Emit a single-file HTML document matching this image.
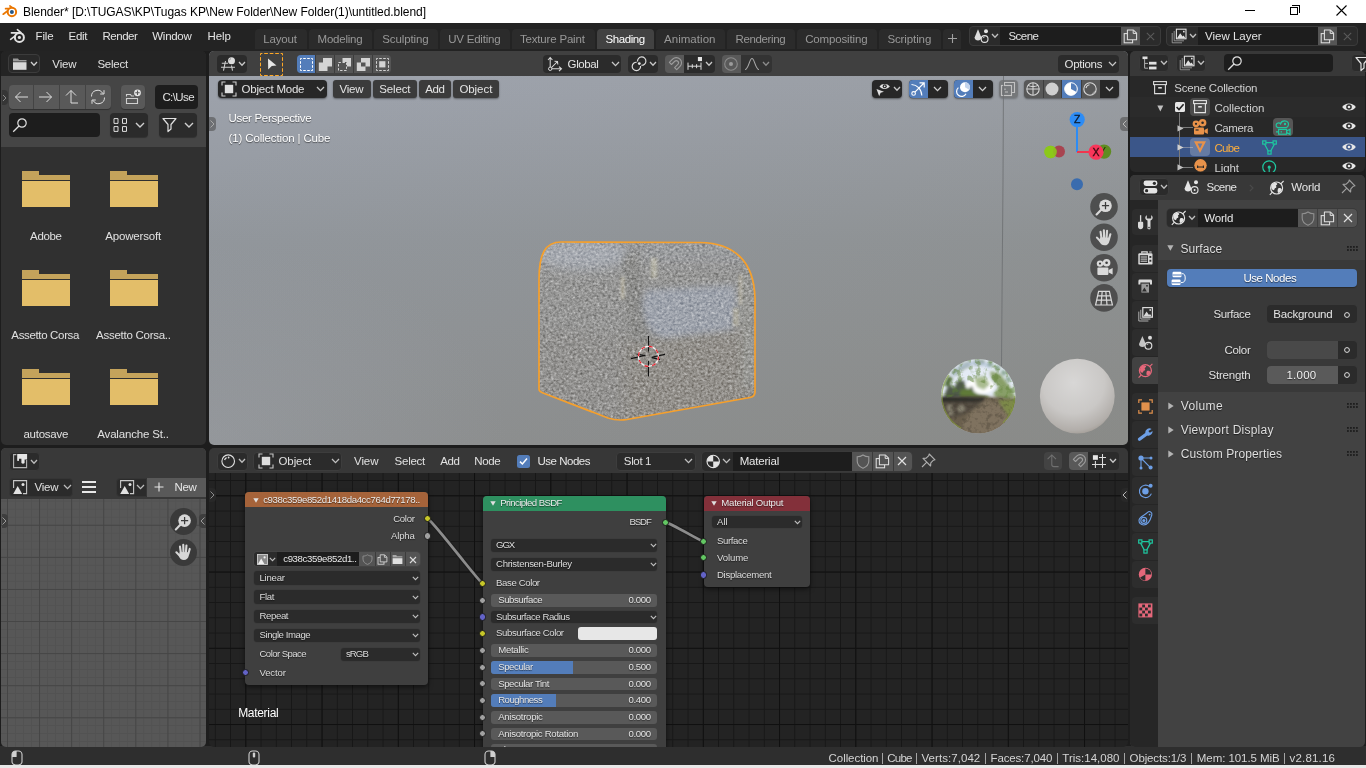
<!DOCTYPE html>
<html><head><meta charset="utf-8"><title>Blender</title>
<style>
*{box-sizing:border-box;margin:0;padding:0}
html,body{width:1366px;height:768px;overflow:hidden;background:#1d1d1d;font-family:"Liberation Sans",sans-serif;font-size:12px}
.a{position:absolute}
.t{position:absolute;white-space:nowrap;line-height:20px;height:20px}
svg{position:absolute;overflow:visible}
.sh{text-shadow:0 1px 1px rgba(0,0,0,.55)}
</style></head>
<body>
<div id="root" style="position:absolute;left:0;top:0;width:1366px;height:768px;will-change:transform">
<!-- title bar -->
<div class="a" style="left:0;top:0;width:1366px;height:23px;background:#fff"></div>
<span class="t" style="left:23px;top:2px;color:#000;font-size:12px;letter-spacing:-0.048px;">Blender* [D:\TUGAS\KP\Tugas KP\New Folder\New Folder(1)\untitled.blend]</span>
<!-- top bar -->
<div class="a" style="left:0;top:23px;width:1366px;height:28px;background:#232323"></div>
<!-- status bar -->
<div class="a" style="left:0;top:746px;width:1366px;height:20px;background:#2e2e2e"></div>
<!-- areas -->
<div class="a" id="fb" style="left:1px;top:51px;width:205px;height:394px;background:#303030;border-radius:5px;overflow:hidden">
  <div class="a" style="left:0;top:0;width:205px;height:25px;background:#242424"></div>
  <div class="a" style="left:0;top:25px;width:205px;height:71px;background:#454545"></div>
</div>
<div class="a" id="ie" style="left:1px;top:448px;width:205px;height:298.8px;background:#575757;border-radius:5px;overflow:hidden">
  <div class="a" style="left:0;top:0;width:205px;height:300px;background-image:linear-gradient(90deg,#454545 1px,transparent 1px),linear-gradient(180deg,#454545 1px,transparent 1px),linear-gradient(90deg,#525252 1px,transparent 1px),linear-gradient(180deg,#525252 1px,transparent 1px);background-size:32.1px 32.1px,32.1px 32.1px,8.025px 8.025px,8.025px 8.025px;background-position:6px 12.6px,6px 12.6px,6px 12.6px,6px 12.6px"></div>
  <div class="a" style="left:0;top:0;width:205px;height:50.5px;background:#393939"></div>
</div>
<div class="a" id="vp" style="left:209px;top:51px;width:918.5px;height:394px;background:linear-gradient(to bottom right,rgba(124,121,103,0) 15%,rgba(124,121,103,.1) 50%,rgba(124,121,103,.3) 100%),radial-gradient(ellipse 300px 200px at 0% 100%,rgba(158,163,172,.5) 0%,rgba(158,163,172,0) 100%),linear-gradient(180deg,#9fa4ad 0%,#9ca1aa 12%,#92979d 48%,#8f9296 100%);border-radius:5px;overflow:hidden">
  <div class="a" style="left:0;top:0;width:919px;height:25px;background:#404040"></div>
</div>
<div class="a" id="ne" style="left:209px;top:448px;width:918.5px;height:298.8px;background:#232323;border-radius:5px;overflow:hidden">
  <div class="a" style="left:0;top:0;width:919px;height:300px;background-image:linear-gradient(90deg,#101010 1.25px,transparent 1.25px),linear-gradient(180deg,#101010 1.25px,transparent 1.25px),linear-gradient(90deg,#171717 1.25px,transparent 1.25px),linear-gradient(180deg,#171717 1.25px,transparent 1.25px);background-size:76.25px 76.25px,76.25px 76.25px,15.25px 15.25px,15.25px 15.25px;background-position:36.3px 47.3px,36.3px 47.3px,36.3px 47.3px,36.3px 47.3px"></div>
  <div class="a" style="left:0;top:0;width:919px;height:25px;background:#373737"></div>
</div>
<div class="a" id="ol" style="left:1130px;top:51px;width:234.5px;height:121px;background:#282828;border-radius:5px;overflow:hidden">
  <div class="a" style="left:0;top:0;width:236px;height:25px;background:#383838"></div>
  <div class="a" style="left:0;top:46px;width:236px;height:20px;background:#2b2b2b"></div>
  <div class="a" style="left:0;top:86px;width:236px;height:20px;background:#3b5689"></div>
</div>
<div class="a" id="pr" style="left:1130px;top:175px;width:234.5px;height:571.8px;background:#424242;border-radius:5px;overflow:hidden">
  <div class="a" style="left:0;top:0;width:236px;height:25px;background:#383838"></div>
  <div class="a" style="left:0;top:25px;width:28px;height:548px;background:#262626"></div>
  <div class="a" style="left:28px;top:85px;width:208px;height:132px;background:#393939"></div>
</div>
<!-- window title icon (blender logo, orange) -->
<svg style="left:2px;top:4px" width="16" height="15" viewBox="0 0 16 15">
  <g stroke="#ea7600" stroke-width="1.7" stroke-linecap="round" fill="none"><path d="M7.9 1.9 L11.2 4.4 M3.6 4.7 H9.4 M1.2 10.2 L5.8 6.8"/></g>
  <circle cx="9.9" cy="7.9" r="4.25" fill="#fff" stroke="#ea7600" stroke-width="2"/>
  <circle cx="9.9" cy="7.9" r="2" fill="#265787"/>
</svg>
<!-- window controls -->
<div class="a" style="left:1245px;top:10px;width:10px;height:1px;background:#000"></div>
<div class="a" style="left:1290px;top:7px;width:8px;height:8px;border:1px solid #000"></div>
<div class="a" style="left:1292px;top:5px;width:8px;height:8px;border:1px solid #000;border-left-color:transparent;border-bottom-color:transparent"></div>
<div class="a" style="left:1292px;top:5px;width:2px;height:1px;background:#000"></div>
<div class="a" style="left:1299px;top:11px;width:1px;height:2px;background:#000"></div>
<svg style="left:1336px;top:5px" width="11" height="11" viewBox="0 0 11 11"><path d="M0.5 0.5 L10.5 10.5 M10.5 0.5 L0.5 10.5" stroke="#000" stroke-width="1.1" fill="none"/></svg>

<!-- topbar blender icon -->
<svg style="left:10px;top:28px" width="16" height="16" viewBox="0 0 16 16">
  <g stroke="#e2e2e2" stroke-width="1.6" stroke-linecap="round" fill="none"><path d="M7.4 1.7 L11 4.7 M1.4 4.9 H9.6 M.6 11.3 L5.2 7.8"/></g>
  <circle cx="9.4" cy="9.4" r="4.5" fill="#232323" stroke="#e2e2e2" stroke-width="2"/>
  <circle cx="9.4" cy="9.4" r="1.6" fill="#e2e2e2"/>
</svg>
<span class="t" style="left:35.5px;top:26px;color:#e4e4e4;font-size:11.5px;letter-spacing:-0.133px;">File</span>
<span class="t" style="left:68.5px;top:26px;color:#e4e4e4;font-size:11.5px;letter-spacing:-0.282px;">Edit</span>
<span class="t" style="left:102.4px;top:26px;color:#e4e4e4;font-size:11.5px;letter-spacing:-0.453px;">Render</span>
<span class="t" style="left:152.3px;top:26px;color:#e4e4e4;font-size:11.5px;letter-spacing:-0.284px;">Window</span>
<span class="t" style="left:207.5px;top:26px;color:#e4e4e4;font-size:11.5px;letter-spacing:-0.114px;">Help</span>

<!-- workspace tabs -->
<div class="a" style="left:255px;top:29px;width:52px;height:20px;background:#2b2b2b;border-radius:4px 4px 0 0"></div>
<div class="a" style="left:309px;top:29px;width:63px;height:20px;background:#2b2b2b;border-radius:4px 4px 0 0"></div>
<div class="a" style="left:374px;top:29px;width:64px;height:20px;background:#2b2b2b;border-radius:4px 4px 0 0"></div>
<div class="a" style="left:440px;top:29px;width:70px;height:20px;background:#2b2b2b;border-radius:4px 4px 0 0"></div>
<div class="a" style="left:512px;top:29px;width:83px;height:20px;background:#2b2b2b;border-radius:4px 4px 0 0"></div>
<div class="a" style="left:597px;top:29px;width:57px;height:20px;background:#424242;border-radius:4px 4px 0 0"></div>
<div class="a" style="left:656px;top:29px;width:69px;height:20px;background:#2b2b2b;border-radius:4px 4px 0 0"></div>
<div class="a" style="left:727px;top:29px;width:68px;height:20px;background:#2b2b2b;border-radius:4px 4px 0 0"></div>
<div class="a" style="left:797px;top:29px;width:80px;height:20px;background:#2b2b2b;border-radius:4px 4px 0 0"></div>
<div class="a" style="left:879px;top:29px;width:62px;height:20px;background:#2b2b2b;border-radius:4px 4px 0 0"></div>
<div class="a" style="left:943px;top:29px;width:18px;height:20px;background:#2b2b2b;border-radius:4px 4px 0 0"></div>
<span class="t" style="left:263.3px;top:29px;color:#989898;font-size:11.5px;letter-spacing:-0.172px;">Layout</span>
<span class="t" style="left:317.6px;top:29px;color:#989898;font-size:11.5px;letter-spacing:-0.246px;">Modeling</span>
<span class="t" style="left:382.3px;top:29px;color:#989898;font-size:11.5px;letter-spacing:-0.124px;">Sculpting</span>
<span class="t" style="left:448.3px;top:29px;color:#989898;font-size:11.5px;letter-spacing:-0.234px;">UV Editing</span>
<span class="t" style="left:520px;top:29px;color:#989898;font-size:11.5px;letter-spacing:-0.187px;">Texture Paint</span>
<span class="t" style="left:605.6px;top:29px;color:#ffffff;font-size:11.5px;letter-spacing:-0.446px;">Shading</span>
<span class="t" style="left:664px;top:29px;color:#989898;font-size:11.5px;letter-spacing:0.040px;">Animation</span>
<span class="t" style="left:735.6px;top:29px;color:#989898;font-size:11.5px;letter-spacing:-0.386px;">Rendering</span>
<span class="t" style="left:805.2px;top:29px;color:#989898;font-size:11.5px;letter-spacing:-0.157px;">Compositing</span>
<span class="t" style="left:887.4px;top:29px;color:#989898;font-size:11.5px;letter-spacing:-0.106px;">Scripting</span>
<svg style="left:947px;top:33px" width="11" height="11" viewBox="0 0 11 11"><path d="M5.5 1 V10 M1 5.5 H10" stroke="#a0a0a0" stroke-width="1.1" fill="none"/></svg>

<!-- scene selector -->
<div class="a" style="left:969px;top:26px;width:192px;height:20px;background:#2b2b2b;border:1px solid #3b3b3b;border-radius:4px"></div>
<div class="a" style="left:1000px;top:27px;width:121px;height:18px;background:#1d1d1d"></div>
<div class="a" style="left:1121px;top:27px;width:19px;height:18px;background:#555"></div>
<span class="t" style="left:1008.5px;top:26px;color:#e4e4e4;font-size:11.5px;letter-spacing:-0.562px;">Scene</span>
<!-- view layer selector -->
<div class="a" style="left:1166px;top:26px;width:192px;height:20px;background:#2b2b2b;border:1px solid #3b3b3b;border-radius:4px"></div>
<div class="a" style="left:1198px;top:27px;width:120px;height:18px;background:#1d1d1d"></div>
<div class="a" style="left:1318px;top:27px;width:19px;height:18px;background:#555"></div>
<span class="t" style="left:1205px;top:26px;color:#e4e4e4;font-size:11.5px;letter-spacing:0.001px;">View Layer</span>
<!-- scene selector icons -->
<svg style="left:974px;top:28px" width="15" height="16" viewBox="0 0 15 16"><path d="M4 1.2 L7.4 9.4 C7.4 11.4 5.8 12.4 4 12.4 C2.2 12.4 .6 11.4 .6 9.4 Z" fill="#dcdcdc"/><circle cx="12" cy="3.2" r="2" fill="#e4e4e4"/><circle cx="10.6" cy="11" r="3.4" fill="#2b2b2b" stroke="#e4e4e4" stroke-width="1.1"/><path d="M9 10.2 A1.8 1.8 0 0 1 10.6 9" stroke="#e4e4e4" stroke-width=".9" fill="none"/></svg>
<svg style="left:991px;top:33px" width="8" height="6" viewBox="0 0 8 6"><path d="M1 1 L4 4.2 L7 1" stroke="#c0c0c0" stroke-width="1.3" fill="none"/></svg>
<svg style="left:1123px;top:28.5px" width="15" height="15" viewBox="0 0 15 15"><rect x="1.2" y="4.6" width="8.4" height="9.2" fill="none" stroke="#e0e0e0" stroke-width="1.05"/><path d="M4.4 1 H10.4 L13.6 4.2 V10.8 H4.4 Z" fill="#555" stroke="#e0e0e0" stroke-width="1.05" stroke-linejoin="round"/><path d="M10.2 1.2 V4.4 H13.4" fill="none" stroke="#e0e0e0" stroke-width="1"/></svg>
<svg style="left:1145.5px;top:31.5px" width="9" height="9" viewBox="0 0 9 9"><path d="M.8 .8 L8.2 8.2 M8.2 .8 L.8 8.2" stroke="#5a5a5a" stroke-width="1.1"/></svg>
<!-- view layer icons -->
<svg style="left:1171px;top:28px" width="16" height="16" viewBox="0 0 16 16"><path d="M1.2 5 V14.8 H11 M3.2 3 V12.8 H13" stroke="#a8a8a8" stroke-width=".8" fill="none"/><rect x="5.4" y="1.2" width="9.6" height="9.6" fill="none" stroke="#e0e0e0" stroke-width="1.1"/><path d="M6 10.2 L9.2 5.2 L11.6 8.6 L12.6 7.6 L14.4 10.2Z" fill="#e0e0e0"/><rect x="12" y="2.8" width="1.6" height="1.6" fill="#e0e0e0"/></svg>
<svg style="left:1189px;top:33px" width="8" height="6" viewBox="0 0 8 6"><path d="M1 1 L4 4.2 L7 1" stroke="#c0c0c0" stroke-width="1.3" fill="none"/></svg>
<svg style="left:1320px;top:28.5px" width="15" height="15" viewBox="0 0 15 15"><rect x="1.2" y="4.6" width="8.4" height="9.2" fill="none" stroke="#e0e0e0" stroke-width="1.05"/><path d="M4.4 1 H10.4 L13.6 4.2 V10.8 H4.4 Z" fill="#555" stroke="#e0e0e0" stroke-width="1.05" stroke-linejoin="round"/><path d="M10.2 1.2 V4.4 H13.4" fill="none" stroke="#e0e0e0" stroke-width="1"/></svg>
<svg style="left:1343px;top:31.5px" width="9" height="9" viewBox="0 0 9 9"><path d="M.8 .8 L8.2 8.2 M8.2 .8 L.8 8.2" stroke="#5a5a5a" stroke-width="1.1"/></svg>
<!-- FILE BROWSER -->
<!-- header -->
<div class="a" style="left:8px;top:54px;width:32px;height:19px;background:#292929;border:1px solid #3c3c3c;border-radius:4px"></div>
<svg style="left:12px;top:57px" width="16" height="14" viewBox="0 0 16 14"><path d="M1 1.5 H6 L7 3 H14.5 V4.5 H1 Z" fill="#9a9a9a"/><path d="M1 5.2 H14.5 V12.8 H1 Z" fill="#d8d8d8"/></svg>
<svg style="left:30px;top:61px" width="8" height="6" viewBox="0 0 8 6"><path d="M1 1 L4 4.2 L7 1" stroke="#cfcfcf" stroke-width="1.3" fill="none"/></svg>
<span class="t" style="left:52.3px;top:54px;color:#e0e0e0;font-size:11.5px;letter-spacing:-0.130px;">View</span>
<span class="t" style="left:97.4px;top:54px;color:#e0e0e0;font-size:11.5px;letter-spacing:-0.245px;">Select</span>
<!-- region toggle -->
<div class="a" style="left:2px;top:90px;width:6px;height:15px;background:#363636;border-radius:0 4px 4px 0"></div>
<svg style="left:2px;top:94px" width="5" height="8" viewBox="0 0 5 8"><path d="M1 1 L4 4 L1 7" stroke="#8a8a8a" stroke-width="1" fill="none"/></svg>
<!-- nav buttons -->
<div class="a" style="left:9px;top:85px;width:102px;height:24px;background:#595959;border-radius:4px;box-shadow:0 1px 1px rgba(0,0,0,.3)"></div>
<div class="a" style="left:33px;top:85px;width:1px;height:24px;background:#444"></div>
<div class="a" style="left:59px;top:85px;width:1px;height:24px;background:#444"></div>
<div class="a" style="left:85px;top:85px;width:1px;height:24px;background:#444"></div>
<svg style="left:14px;top:90px" width="15" height="14" viewBox="0 0 15 14"><path d="M14 7 H1.5 M6.5 2 L1.5 7 L6.5 12" stroke="#dedede" stroke-width="1" fill="none"/></svg>
<svg style="left:38px;top:90px" width="15" height="14" viewBox="0 0 15 14"><path d="M1 7 H13.5 M8.5 2 L13.5 7 L8.5 12" stroke="#dedede" stroke-width="1" fill="none"/></svg>
<svg style="left:64px;top:89px" width="16" height="16" viewBox="0 0 16 16"><path d="M2 6.5 L7 1.5 L12 6.5 M7 1.5 V14 H14" stroke="#dedede" stroke-width="1" fill="none"/></svg>
<svg style="left:90px;top:89px" width="16" height="16" viewBox="0 0 16 16"><path d="M1.5 7.5 A6 6 0 0 1 12.8 4.5 M14 1.2 V5 H10.2 M14.5 8.5 A6 6 0 0 1 3.2 11.5 M2 14.8 V11 H5.8" stroke="#dedede" stroke-width="1" fill="none"/></svg>
<!-- new folder -->
<div class="a" style="left:121px;top:85px;width:24px;height:24px;background:#595959;border-radius:4px;box-shadow:0 1px 1px rgba(0,0,0,.3)"></div>
<svg style="left:125px;top:88px" width="18" height="18" viewBox="0 0 18 18"><path d="M1.5 10.5 H12.5 V15.5 H1.5 Z M1.5 8.5 V6.5 H5.5 L6.5 8 H9" stroke="#d0d0d0" stroke-width="1.1" fill="none"/><circle cx="12.5" cy="4.8" r="3.4" fill="#e6e6e6"/><path d="M12.5 2.6 V7 M10.3 4.8 H14.7" stroke="#595959" stroke-width="1.1"/></svg>
<!-- path -->
<div class="a" style="left:155px;top:85px;width:43px;height:24px;background:#1d1d1d;border-radius:4px;overflow:hidden"></div>
<div class="a" style="left:155px;top:85px;width:43px;height:24px;overflow:hidden"><span class="t" style="left:7.4px;top:2px;color:#e0e0e0;font-size:11.5px;letter-spacing:-0.576px;">C:\Use</span></div>
<!-- search -->
<div class="a" style="left:9px;top:113px;width:91px;height:24px;background:#1d1d1d;border-radius:4px"></div>
<svg style="left:12px;top:117px" width="16" height="16" viewBox="0 0 16 16"><circle cx="10" cy="6" r="4.2" stroke="#e0e0e0" stroke-width="1.2" fill="none"/><path d="M7 9 L1.2 14.8" stroke="#e0e0e0" stroke-width="1.3"/></svg>
<!-- display mode -->
<div class="a" style="left:110px;top:113px;width:38px;height:24px;background:#2b2b2b;border-radius:4px;box-shadow:0 1px 1px rgba(0,0,0,.3)"></div>
<svg style="left:113px;top:118px" width="16" height="15" viewBox="0 0 16 15"><path d="M1 0.6 H5 V5.4 H1 Z M9.5 0.6 H13.5 V5.4 H9.5 Z M1 8.6 H5 V13.4 H1 Z M9.5 8.6 H13.5 V13.4 H9.5 Z" stroke="#dedede" stroke-width="1" fill="none"/></svg>
<svg style="left:135px;top:122px" width="10" height="7" viewBox="0 0 10 7"><path d="M1 1 L5 5 L9 1" stroke="#d0d0d0" stroke-width="1.4" fill="none"/></svg>
<!-- filter -->
<div class="a" style="left:159px;top:113px;width:38px;height:24px;background:#2b2b2b;border-radius:4px;box-shadow:0 1px 1px rgba(0,0,0,.3)"></div>
<svg style="left:162px;top:117px" width="16" height="16" viewBox="0 0 16 16"><path d="M1 1.5 H14 L9 7.5 V12 L6 14.5 V7.5 Z" stroke="#e0e0e0" stroke-width="1.2" fill="none" stroke-linejoin="round"/></svg>
<svg style="left:184px;top:122px" width="10" height="7" viewBox="0 0 10 7"><path d="M1 1 L5 5 L9 1" stroke="#d0d0d0" stroke-width="1.4" fill="none"/></svg>

<!-- folders -->
<svg style="left:22px;top:171px" width="48" height="36" viewBox="0 0 48 36"><path d="M0 0 H17 V4 H48 V9 H0 Z" fill="#c4a35b"/><path d="M0 10 H48 V36 H0 Z" fill="#e3be69"/></svg>
<svg style="left:110px;top:171px" width="48" height="36" viewBox="0 0 48 36"><path d="M0 0 H17 V4 H48 V9 H0 Z" fill="#c4a35b"/><path d="M0 10 H48 V36 H0 Z" fill="#e3be69"/></svg>
<svg style="left:22px;top:270px" width="48" height="36" viewBox="0 0 48 36"><path d="M0 0 H17 V4 H48 V9 H0 Z" fill="#c4a35b"/><path d="M0 10 H48 V36 H0 Z" fill="#e3be69"/></svg>
<svg style="left:110px;top:270px" width="48" height="36" viewBox="0 0 48 36"><path d="M0 0 H17 V4 H48 V9 H0 Z" fill="#c4a35b"/><path d="M0 10 H48 V36 H0 Z" fill="#e3be69"/></svg>
<svg style="left:22px;top:369px" width="48" height="36" viewBox="0 0 48 36"><path d="M0 0 H17 V4 H48 V9 H0 Z" fill="#c4a35b"/><path d="M0 10 H48 V36 H0 Z" fill="#e3be69"/></svg>
<svg style="left:110px;top:369px" width="48" height="36" viewBox="0 0 48 36"><path d="M0 0 H17 V4 H48 V9 H0 Z" fill="#c4a35b"/><path d="M0 10 H48 V36 H0 Z" fill="#e3be69"/></svg>
<span class="t" style="left:30.1px;top:226px;color:#e0e0e0;font-size:11.5px;letter-spacing:-0.373px;">Adobe</span>
<span class="t" style="left:105.2px;top:226px;color:#e0e0e0;font-size:11.5px;letter-spacing:-0.163px;">Apowersoft</span>
<span class="t" style="left:11.3px;top:325px;color:#e0e0e0;font-size:11.5px;letter-spacing:-0.341px;">Assetto Corsa</span>
<span class="t" style="left:96px;top:325px;color:#e0e0e0;font-size:11.5px;letter-spacing:-0.262px;">Assetto Corsa..</span>
<span class="t" style="left:23.4px;top:424px;color:#e0e0e0;font-size:11.5px;letter-spacing:-0.236px;">autosave</span>
<span class="t" style="left:97.3px;top:424px;color:#e0e0e0;font-size:11.5px;letter-spacing:-0.182px;">Avalanche St..</span>
<!-- IMAGE EDITOR -->
<div class="a" style="left:9px;top:452px;width:31px;height:19px;background:#2b2b2b;border:1px solid #3a3a3a;border-radius:4px"></div>
<svg style="left:13px;top:454px" width="15" height="15" viewBox="0 0 15 15"><path d="M3.4 0.6 H0.6 V13.6 H13.6 V6" stroke="#b4b4b4" stroke-width="1.1" fill="none"/><path d="M4.2 0.1 H14.1 V5.5 H11.6 V9 Q10 10.6 8.4 9 V4.8 H6 V6.6 Q5 7.6 4.2 6.6 Z" fill="#e6e6e6"/></svg>
<svg style="left:30px;top:459px" width="8" height="6" viewBox="0 0 8 6"><path d="M1 1 L4 4.2 L7 1" stroke="#bdbdbd" stroke-width="1.3" fill="none"/></svg>
<!-- view menu -->
<div class="a" style="left:9px;top:478px;width:64px;height:19px;background:#2b2b2b;border:1px solid #353535;border-radius:4px"></div>
<svg style="left:13px;top:480px" width="15" height="15" viewBox="0 0 15 15"><path d="M0.6 8 V0.6 H13.6 V13.6 H10" stroke="#c8c8c8" stroke-width="1.1" fill="none"/><path d="M0.2 14 L4.7 6 L9.2 14 Z" fill="#e2e2e2"/><circle cx="10" cy="4.4" r="1.5" fill="#e2e2e2"/></svg>
<span class="t" style="left:34.4px;top:477px;color:#e0e0e0;font-size:11.5px;letter-spacing:-0.180px;">View</span>
<svg style="left:63px;top:484px" width="9" height="7" viewBox="0 0 9 7"><path d="M1 1 L4.5 4.6 L8 1" stroke="#bdbdbd" stroke-width="1.3" fill="none"/></svg>
<!-- hamburger -->
<div class="a" style="left:82px;top:480.8px;width:14px;height:1.9px;background:#e8e8e8"></div>
<div class="a" style="left:82px;top:486px;width:14px;height:1.9px;background:#e8e8e8"></div>
<div class="a" style="left:82px;top:491.3px;width:14px;height:1.9px;background:#e8e8e8"></div>
<!-- image selector -->
<div class="a" style="left:116px;top:478px;width:31px;height:19px;background:#2b2b2b;border:1px solid #353535;border-radius:4px 0 0 4px"></div>
<svg style="left:120px;top:480px" width="15" height="15" viewBox="0 0 15 15"><path d="M0.6 8 V0.6 H13.6 V13.6 H10" stroke="#c8c8c8" stroke-width="1.1" fill="none"/><path d="M0.2 14 L4.7 6 L9.2 14 Z" fill="#e2e2e2"/><circle cx="10" cy="4.4" r="1.5" fill="#e2e2e2"/></svg>
<svg style="left:136px;top:484px" width="9" height="7" viewBox="0 0 9 7"><path d="M1 1 L4.5 4.6 L8 1" stroke="#bdbdbd" stroke-width="1.3" fill="none"/></svg>
<div class="a" style="left:147px;top:478px;width:59px;height:19px;background:#595959"></div>
<svg style="left:154px;top:482px" width="10" height="10" viewBox="0 0 10 10"><path d="M5 0.5 V9.5 M0.5 5 H9.5" stroke="#e8e8e8" stroke-width="1.1" fill="none"/></svg>
<span class="t" style="left:174.4px;top:477px;color:#e6e6e6;font-size:11.5px;letter-spacing:-0.239px;">New</span>
<!-- region toggles -->
<div class="a" style="left:2px;top:514px;width:6px;height:14px;background:#3e3e3e;border-radius:0 4px 4px 0"></div>
<svg style="left:2px;top:517px" width="5" height="8" viewBox="0 0 5 8"><path d="M0.5 0.5 L4 4 L0.5 7.5" stroke="#9a9a9a" stroke-width="1" fill="none"/></svg>
<div class="a" style="left:199px;top:514px;width:7px;height:14px;background:#3e3e3e;border-radius:4px 0 0 4px"></div>
<svg style="left:200px;top:517px" width="5" height="8" viewBox="0 0 5 8"><path d="M4.5 0.5 L1 4 L4.5 7.5" stroke="#9a9a9a" stroke-width="1" fill="none"/></svg>
<!-- nav gizmos -->
<div class="a" style="left:169.5px;top:508px;width:27px;height:27px;border-radius:50%;background:#3a3a3a"></div>
<svg style="left:174px;top:512px" width="19" height="19" viewBox="0 0 19 19"><path d="M6.6 12.6 L1.8 17.4" stroke="#d6d6d6" stroke-width="2.1" stroke-linecap="round"/><circle cx="10.6" cy="8.6" r="6.3" fill="#d6d6d6"/><path d="M10.6 5 V12.2 M7 8.6 H14.2" stroke="#3a3a3a" stroke-width="1.25"/></svg>
<div class="a" style="left:169.5px;top:538.5px;width:27px;height:27px;border-radius:50%;background:#3a3a3a"></div>
<svg style="left:174.8px;top:543.4px" width="18" height="18" viewBox="0 0 17 17"><g stroke="#d6d6d6" stroke-width="2" stroke-linecap="round" fill="none"><path d="M4.7 3.4 L5.6 9.5 M7.8 1.8 L8 9 M10.8 2.4 L10.3 9 M13.9 5.6 L12.6 10.4 M1.3 8.8 L4.8 12.4"/></g><path d="M4.5 8.4 L12.9 8.8 L13.2 11.4 C12.7 14.6 10.7 16.1 8.4 16.1 C6 16.1 4.2 14.6 3.5 12 Z" fill="#d6d6d6"/></svg>
<!-- VIEWPORT tool header -->
<div class="a" style="left:217px;top:55px;width:30px;height:18px;background:#2b2b2b;border-radius:4px"></div>
<svg style="left:220px;top:56px" width="17" height="16" viewBox="0 0 17 16"><path d="M1.8 7.2 H8 M1 11.3 H15 M5.5 5 L3.5 14.6 M11.5 9.5 L12.5 14.6" stroke="#d0d0d0" stroke-width="1.05" fill="none"/><circle cx="11.5" cy="4.7" r="3.5" fill="#dcdcdc"/><path d="M9.4 4.4 A2.2 2.2 0 0 1 11 2.6" stroke="#8a8a8a" stroke-width=".8" fill="none"/></svg>
<svg style="left:238px;top:61px" width="8" height="6" viewBox="0 0 8 6"><path d="M1 1 L4 4.2 L7 1" stroke="#c8c8c8" stroke-width="1.3" fill="none"/></svg>
<!-- active tool -->
<svg style="left:260px;top:53px" width="23" height="23" viewBox="0 0 23 23"><rect x="0.5" y="0.5" width="22" height="22" fill="none" stroke="#ffa826" stroke-width="1" stroke-dasharray="3.7 1.8" stroke-dashoffset="1.8"/><path d="M8 5.5 L16.5 12.5 L11.8 13 L8.2 16.5 Z" fill="#e6e6e6"/></svg>
<!-- select modes -->
<div class="a" style="left:297px;top:55px;width:94px;height:18px;background:#555;border-radius:4px"></div>
<div class="a" style="left:297px;top:55px;width:18px;height:18px;background:#537dba;border-radius:4px 0 0 4px"></div>
<div class="a" style="left:315px;top:55px;width:1px;height:18px;background:#3c3c3c"></div>
<div class="a" style="left:334px;top:55px;width:1px;height:18px;background:#3c3c3c"></div>
<div class="a" style="left:353px;top:55px;width:1px;height:18px;background:#3c3c3c"></div>
<div class="a" style="left:372px;top:55px;width:1px;height:18px;background:#3c3c3c"></div>
<svg style="left:299px;top:57px" width="15" height="15" viewBox="0 0 15 15"><rect x="1.5" y="1.5" width="12" height="12" fill="none" stroke="#fff" stroke-width="1" stroke-dasharray="2.6 1.4" stroke-dashoffset="1.3"/></svg>
<svg style="left:318px;top:57px" width="15" height="15" viewBox="0 0 15 15"><path d="M5 1 H14 V9.5 H9.5 V14 H0.8 V5.5 H5 Z" fill="#d4d4d4"/></svg>
<svg style="left:337px;top:57px" width="15" height="15" viewBox="0 0 15 15"><path d="M5.5 1 H14 V9.5 H10 V5 H5.5 Z" fill="#d4d4d4"/><path d="M1.5 5.500 H9.5 V13.5 H1.5 Z" fill="none" stroke="#d4d4d4" stroke-width="1" stroke-dasharray="2.4 1.6"/></svg>
<svg style="left:356px;top:57px" width="15" height="15" viewBox="0 0 15 15"><path d="M5 1 H14 V9.5 H9.5 V14 H0.8 V5.5 H5 Z M5 5.5 V9.5 H9.5 V5.5 Z" fill="#d4d4d4" fill-rule="evenodd"/></svg>
<svg style="left:375px;top:57px" width="15" height="15" viewBox="0 0 15 15"><rect x="1.5" y="1.5" width="12" height="12" fill="none" stroke="#d4d4d4" stroke-width="1" stroke-dasharray="2.6 1.4" stroke-dashoffset="1.3"/><rect x="4.2" y="4.2" width="6.2" height="6.2" fill="#d4d4d4"/></svg>
<!-- orientation -->
<div class="a" style="left:543px;top:55px;width:78px;height:18px;background:#2b2b2b;border-radius:4px"></div>
<svg style="left:547px;top:56px" width="16" height="16" viewBox="0 0 16 16"><path d="M3.2 12.8 V1.5 M1 4 L3.2 1.5 L5.4 4 M3.2 12.8 H14.5 M12 10.6 L14.5 12.8 L12 15 M3.2 12.8 L10.5 5.5 M7.5 5.2 L10.5 5.5 L10.8 8.5" stroke="#d8d8d8" stroke-width="1.05" fill="none"/><circle cx="3.2" cy="12.8" r="1.7" fill="#2b2b2b" stroke="#d8d8d8" stroke-width="1"/></svg>
<span class="t" style="left:567.6px;top:54px;color:#e4e4e4;font-size:11.5px;letter-spacing:-0.408px;">Global</span>
<svg style="left:611px;top:61px" width="9" height="7" viewBox="0 0 9 7"><path d="M1 1 L4.5 4.6 L8 1" stroke="#c8c8c8" stroke-width="1.3" fill="none"/></svg>
<!-- pivot -->
<div class="a" style="left:628px;top:55px;width:30px;height:18px;background:#2b2b2b;border-radius:4px"></div>
<svg style="left:631px;top:56px" width="17" height="16" viewBox="0 0 17 16"><path d="M6.52 5.47 A4.2 4.2 0 1 1 10.33 9.28 M9.58 10.03 A4.2 4.2 0 1 1 5.77 6.22" stroke="#dcdcdc" stroke-width="1.15" fill="none"/><circle cx="8.3" cy="7.6" r="1.4" fill="#e8e8e8"/></svg>
<svg style="left:649px;top:61px" width="8" height="6" viewBox="0 0 8 6"><path d="M1 1 L4 4.2 L7 1" stroke="#c8c8c8" stroke-width="1.3" fill="none"/></svg>
<!-- snap -->
<div class="a" style="left:665px;top:55px;width:19px;height:18px;background:#595959;border-radius:4px 0 0 4px"></div>
<div class="a" style="left:684px;top:55px;width:31px;height:18px;background:#2b2b2b;border-radius:0 4px 4px 0"></div>
<svg style="left:667px;top:56px" width="16" height="16" viewBox="0 0 16 16"><path d="M2.37 6.37 L5.62 3.12 A5.2 5.2 0 0 1 12.98 10.48 L9.73 13.73 L7.61 11.61 L10.86 8.36 A2.2 2.2 0 0 0 7.74 5.24 L4.49 8.49 Z" stroke="#9c9c9c" stroke-width="1.1" fill="none" stroke-linejoin="round"/></svg>
<svg style="left:687px;top:57px" width="16" height="14" viewBox="0 0 16 14"><path d="M1 9.2 H14 M1 5.6 V12.8 M5.3 7.2 V11.2 M9.6 7.2 V11.2 M14 5.6 V12.8" stroke="#dcdcdc" stroke-width="1" fill="none"/><rect x="10.9" y="0" width="4.1" height="4.1" fill="#e6e6e6"/></svg>
<svg style="left:705px;top:61px" width="8" height="6" viewBox="0 0 8 6"><path d="M1 1 L4 4.2 L7 1" stroke="#c8c8c8" stroke-width="1.3" fill="none"/></svg>
<!-- proportional -->
<div class="a" style="left:722px;top:55px;width:19px;height:18px;background:#595959;border-radius:4px 0 0 4px"></div>
<div class="a" style="left:741px;top:55px;width:31px;height:18px;background:#333;border-radius:0 4px 4px 0"></div>
<svg style="left:723px;top:56px" width="16" height="16" viewBox="0 0 16 16"><circle cx="8" cy="8" r="6.3" fill="none" stroke="#8c8c8c" stroke-width="1.1"/><circle cx="8" cy="8" r="2" fill="#9c9c9c"/></svg>
<svg style="left:743px;top:57px" width="16" height="14" viewBox="0 0 16 14"><path d="M2 12.5 C5.6 12.5 6.4 1.5 9 1.5 C11.6 1.5 12.4 12.5 16 12.5" stroke="#a8a8a8" stroke-width="1.1" fill="none"/></svg>
<svg style="left:762px;top:61px" width="8" height="6" viewBox="0 0 8 6"><path d="M1 1 L4 4.2 L7 1" stroke="#8c8c8c" stroke-width="1.3" fill="none"/></svg>
<!-- options -->
<div class="a" style="left:1058px;top:55px;width:61px;height:18px;background:#2b2b2b;border-radius:4px"></div>
<span class="t" style="left:1064.6px;top:54px;color:#e4e4e4;font-size:11.5px;letter-spacing:-0.306px;">Options</span>
<svg style="left:1108px;top:61px" width="9" height="7" viewBox="0 0 9 7"><path d="M1 1 L4.5 4.6 L8 1" stroke="#c8c8c8" stroke-width="1.3" fill="none"/></svg>

<!-- VIEWPORT overlay header row -->
<div class="a" style="left:217.5px;top:80px;width:109px;height:18px;background:#272727;border-radius:4px;box-shadow:0 1px 2px rgba(0,0,0,.45)"></div>
<svg style="left:221px;top:81px" width="16" height="16" viewBox="0 0 16 16"><path d="M1 4.5 V1 H4.5 M11.5 1 H15 V4.5 M15 11.5 V15 H11.5 M4.5 15 H1 V11.5" stroke="#d0d0d0" stroke-width="1.1" fill="none"/><rect x="3.8" y="3.8" width="8.4" height="8.4" fill="#e0e0e0"/></svg>
<span class="t" style="left:241.5px;top:79px;color:#e4e4e4;font-size:11.5px;letter-spacing:-0.218px;">Object Mode</span>
<svg style="left:316px;top:86px" width="9" height="7" viewBox="0 0 9 7"><path d="M1 1 L4.5 4.6 L8 1" stroke="#c8c8c8" stroke-width="1.3" fill="none"/></svg>
<div class="a" style="left:333px;top:80px;width:38px;height:18px;background:#3b3b3b;border-radius:3px;box-shadow:0 1px 2px rgba(0,0,0,.4)"></div>
<div class="a" style="left:373px;top:80px;width:44px;height:18px;background:#3b3b3b;border-radius:3px;box-shadow:0 1px 2px rgba(0,0,0,.4)"></div>
<div class="a" style="left:419px;top:80px;width:32px;height:18px;background:#3b3b3b;border-radius:3px;box-shadow:0 1px 2px rgba(0,0,0,.4)"></div>
<div class="a" style="left:453px;top:80px;width:46px;height:18px;background:#3b3b3b;border-radius:3px;box-shadow:0 1px 2px rgba(0,0,0,.4)"></div>
<span class="t" style="left:339.5px;top:79px;color:#e4e4e4;font-size:11.5px;letter-spacing:-0.230px;">View</span>
<span class="t" style="left:379.3px;top:79px;color:#e4e4e4;font-size:11.5px;letter-spacing:-0.161px;">Select</span>
<span class="t" style="left:425.2px;top:79px;color:#e4e4e4;font-size:11.5px;letter-spacing:-0.356px;">Add</span>
<span class="t" style="left:459.4px;top:79px;color:#e4e4e4;font-size:11.5px;letter-spacing:-0.058px;">Object</span>
<!-- right side -->
<div class="a" style="left:872px;top:80px;width:30px;height:18px;background:#272727;border-radius:4px;box-shadow:0 1px 2px rgba(0,0,0,.45)"></div>
<svg style="left:875px;top:81px" width="17" height="16" viewBox="0 0 17 16"><path d="M4.5 5.5 C6.5 2.2 12.5 2.2 14.8 5.5 C12.5 8.8 6.5 8.8 4.5 5.5 Z" fill="#e0e0e0"/><circle cx="9.7" cy="5.3" r="2" fill="#222"/><circle cx="9.7" cy="5.3" r="0.9" fill="#e0e0e0"/><path d="M1.5 8 L9 10.8 L5.6 11.8 L4.2 15.2 Z" fill="#e0e0e0"/></svg>
<svg style="left:893px;top:86px" width="8" height="6" viewBox="0 0 8 6"><path d="M1 1 L4 4.2 L7 1" stroke="#c8c8c8" stroke-width="1.3" fill="none"/></svg>
<div class="a" style="left:908.5px;top:80px;width:39px;height:18px;background:#272727;border-radius:4px;box-shadow:0 1px 2px rgba(0,0,0,.45)"></div>
<div class="a" style="left:908.5px;top:80px;width:19px;height:18px;background:#537dba;border-radius:4px 0 0 4px"></div>
<svg style="left:910px;top:81px" width="16" height="16" viewBox="0 0 16 16"><path d="M1.5 3.5 C7 3.8 11.5 8 11.8 14.5 M4.6 11.4 L14 2 M9.5 1.8 H14.2 V6.5" stroke="#fff" stroke-width="1.15" fill="none"/><circle cx="3.6" cy="12.4" r="1.8" fill="#537dba" stroke="#fff" stroke-width="1.1"/></svg>
<svg style="left:933px;top:86px" width="9" height="7" viewBox="0 0 9 7"><path d="M1 1 L4.5 4.6 L8 1" stroke="#d0d0d0" stroke-width="1.3" fill="none"/></svg>
<div class="a" style="left:953.5px;top:80px;width:39px;height:18px;background:#272727;border-radius:4px;box-shadow:0 1px 2px rgba(0,0,0,.45)"></div>
<div class="a" style="left:953.5px;top:80px;width:19px;height:18px;background:#537dba;border-radius:4px 0 0 4px"></div>
<svg style="left:955px;top:81px" width="16" height="16" viewBox="0 0 16 16"><circle cx="10" cy="6.2" r="5" fill="#fff"/><path d="M10 6.2 L10 1.2 A5 5 0 0 1 14.3 8.7 Z" fill="#c4d4ec"/><path d="M11 12.8 A5 5 0 1 1 3.4 6.6" stroke="#fff" stroke-width="1.2" fill="none"/></svg>
<svg style="left:978px;top:86px" width="9" height="7" viewBox="0 0 9 7"><path d="M1 1 L4.5 4.6 L8 1" stroke="#d0d0d0" stroke-width="1.3" fill="none"/></svg>
<!-- xray -->
<div class="a" style="left:998.5px;top:80px;width:19px;height:18px;background:rgba(90,90,90,.55);border-radius:4px;box-shadow:0 1px 2px rgba(0,0,0,.25)"></div>
<svg style="left:1000px;top:81px" width="16" height="16" viewBox="0 0 16 16"><path d="M4.5 4.5 V1.5 H14.5 V11.5 H11.5" stroke="#c2c2c2" stroke-width="1.1" fill="none"/><rect x="1.5" y="4.5" width="10" height="10" fill="none" stroke="#c2c2c2" stroke-width="1.1"/><path d="M5 7.5 V9 M5 11 H8" stroke="#c2c2c2" stroke-width="1.1"/></svg>
<!-- shading -->
<div class="a" style="left:1023.5px;top:80px;width:95.5px;height:18px;background:#585858;border-radius:4px;box-shadow:0 1px 2px rgba(0,0,0,.45)"></div>
<div class="a" style="left:1061.5px;top:80px;width:19px;height:18px;background:#537dba"></div>
<div class="a" style="left:1099.5px;top:80px;width:19.5px;height:18px;background:#272727;border-radius:0 4px 4px 0"></div>
<div class="a" style="left:1042.5px;top:80px;width:1px;height:18px;background:#3e3e3e"></div>
<div class="a" style="left:1061px;top:80px;width:1px;height:18px;background:#3e3e3e"></div>
<div class="a" style="left:1080.5px;top:80px;width:1px;height:18px;background:#3e3e3e"></div>
<svg style="left:1026px;top:82px" width="14" height="14" viewBox="0 0 14 14"><circle cx="7" cy="7" r="6.2" fill="none" stroke="#d8d8d8" stroke-width="1.05"/><path d="M0.8 7 H13.2 M7 0.8 V13.2 M2 3.4 C5 5 9 5 12 3.4" stroke="#d8d8d8" stroke-width="1" fill="none"/></svg>
<svg style="left:1045px;top:82px" width="14" height="14" viewBox="0 0 14 14"><circle cx="7" cy="7" r="6.5" fill="#cfcfcf"/></svg>
<svg style="left:1064px;top:82px" width="14" height="14" viewBox="0 0 14 14"><circle cx="7" cy="7" r="6.3" fill="#fff"/><path d="M7 7 V0.7 A6.3 6.3 0 0 1 12.6 10 Z" fill="#537dba"/><circle cx="7" cy="7" r="6.3" fill="none" stroke="#fff" stroke-width="1"/></svg>
<svg style="left:1083px;top:82px" width="14" height="14" viewBox="0 0 14 14"><circle cx="7" cy="7" r="6.2" fill="none" stroke="#d8d8d8" stroke-width="1.1"/><path d="M3 6 A4.2 4.2 0 0 1 6.5 2.8" stroke="#d8d8d8" stroke-width="1.1" fill="none"/><path d="M9 12 L12.2 8.5 M11 12.4 L12.8 10.4" stroke="#a0a0a0" stroke-width=".8"/></svg>
<svg style="left:1105px;top:86px" width="9" height="7" viewBox="0 0 9 7"><path d="M1 1 L4.5 4.6 L8 1" stroke="#d0d0d0" stroke-width="1.3" fill="none"/></svg>
<!-- overlay text -->
<span class="t" style="left:228.5px;top:108px;color:#ffffff;font-size:11.5px;letter-spacing:-0.298px;"><span class="sh">User Perspective</span></span>
<span class="t" style="left:228.5px;top:128px;color:#ffffff;font-size:11.5px;letter-spacing:-0.130px;"><span class="sh">(1) Collection | Cube</span></span>
<!-- region toggles -->
<div class="a" style="left:209px;top:117px;width:7px;height:14px;background:rgba(80,80,80,.6);border-radius:0 4px 4px 0"></div>
<svg style="left:210px;top:120px" width="5" height="8" viewBox="0 0 5 8"><path d="M0.5 0.5 L4 4 L0.5 7.5" stroke="#a8a8a8" stroke-width="1" fill="none"/></svg>
<div class="a" style="left:1120px;top:117px;width:8px;height:14px;background:rgba(80,80,80,.6);border-radius:4px 0 0 4px"></div>
<svg style="left:1122px;top:120px" width="5" height="8" viewBox="0 0 5 8"><path d="M4.5 0.5 L1 4 L4.5 7.5" stroke="#b8b8b8" stroke-width="1" fill="none"/></svg>
<!-- VIEWPORT SCENE -->
<svg style="left:209px;top:76px" width="919" height="369" viewBox="209 76 919 369">
  <defs>
    <filter id="fz" x="0" y="0" width="100%" height="100%" color-interpolation-filters="sRGB">
      <feTurbulence type="fractalNoise" baseFrequency="0.37 0.41" numOctaves="3" seed="4" result="n0"/>
      <feGaussianBlur in="n0" stdDeviation="0.4" result="n"/>
      <feColorMatrix in="n" type="matrix" values="0.36 0.36 0 0 0.15  0.36 0.36 0 0 0.15  0.36 0.36 0 0 0.15  0 0 0 0 1" result="g"/>
      <feBlend in="g" in2="SourceGraphic" mode="overlay" result="o"/>
      <feComposite in="o" in2="SourceGraphic" operator="in"/>
    </filter>
    <clipPath id="sofa"><path d="M539 389 L539 280 C539 254 545 242 561 242 L700 242.5 C735 243 754 262 755 298 L755 392 Q755 396.5 750 397.5 L627 419.5 Q617 421 608 418 L543 393 Q539 391.5 539 389 Z"/></clipPath>
    <filter id="tree" x="0" y="0" width="100%" height="100%" color-interpolation-filters="sRGB">
      <feTurbulence type="fractalNoise" baseFrequency="0.16" numOctaves="3" seed="3" result="n"/>
      <feColorMatrix in="n" type="matrix" values="0 0 0 0 0.36  0 0 0 0 0.50  0 0 0 0 0.20  5 0 0 0 -2.45" result="m"/>
      <feComposite in="m" in2="SourceGraphic" operator="in"/>
    </filter>
    <filter id="dirt" x="0" y="0" width="100%" height="100%" color-interpolation-filters="sRGB">
      <feTurbulence type="fractalNoise" baseFrequency="0.22" numOctaves="3" seed="9" result="n"/>
      <feColorMatrix in="n" type="matrix" values="0 0 0 0 0.22  0 0 0 0 0.20  0 0 0 0 0.16  0 4 0 0 -1.9" result="m"/>
      <feComposite in="m" in2="SourceGraphic" operator="in"/>
    </filter>
    <filter id="b6"><feGaussianBlur stdDeviation="6"/></filter>
    <filter id="b3"><feGaussianBlur stdDeviation="3"/></filter>
    <filter id="b2"><feGaussianBlur stdDeviation="1.6"/></filter>
    <radialGradient id="matball" cx="0.45" cy="0.32" r="0.75"><stop offset="0" stop-color="#d8d7d6"/><stop offset="0.55" stop-color="#cac8c6"/><stop offset="0.85" stop-color="#b2aeaa"/><stop offset="1" stop-color="#979088"/></radialGradient>
    <clipPath id="hb"><circle cx="978.3" cy="396.1" r="37.2"/></clipPath>
  </defs>
  <!-- world axis line -->
  <path d="M1003.5 76 L1003 180 L1002 300 L1001.5 366" stroke="#6c6e70" stroke-width="1" fill="none" opacity=".8"/>
  <!-- sofa -->
  <g clip-path="url(#sofa)">
    <g filter="url(#fz)">
      <rect x="535" y="238" width="225" height="186" fill="#949493"/>
      <g filter="url(#b6)">
        <ellipse cx="582" cy="254" rx="48" ry="16" fill="#a4a8af"/>
        <rect x="640" y="240" width="110" height="22" fill="#989a9c"/>
        <path d="M535 330 L625 335 L625 425 L535 425 Z" fill="#91908e"/>
        <path d="M625 338 L760 328 L760 425 L625 425 Z" fill="#908d88"/>
      </g>
      <g filter="url(#b3)">
        <path d="M646 290 L734 285 Q740 310 732 330 L664 338 Q644 334 642 302 Z" fill="#9ca1aa"/>
        <path d="M624 258 Q631 250 638 258 L642 300 Q643 330 655 340 L632 342 Q623 300 624 258Z" fill="#8a8a88"/>
        <rect x="742" y="268" width="14" height="120" fill="#969693"/>
      </g>
      <g filter="url(#b2)">
        <rect x="621" y="277" width="3.5" height="22" fill="#b8b4a4"/>
        <rect x="651" y="258" width="6" height="20" fill="#b4b2a6"/>
        <rect x="739" y="275" width="3" height="30" fill="#b0ac9e"/>
        <rect x="733" y="308" width="6" height="18" fill="#aaa89c"/>
      </g>
    </g>
  </g>
  <path d="M539 389 L539 280 C539 254 545 242 561 242 L700 242.5 C735 243 754 262 755 298 L755 392 Q755 396.5 750 397.5 L627 419.5 Q617 421 608 418 L543 393 Q539 391.5 539 389 Z" fill="none" stroke="#f6a02c" stroke-width="1.7" stroke-linejoin="round"/>
  <!-- 3d cursor -->
  <g>
    <path d="M648.5 336 V351.5 M648.5 361 V376.5 M631 358.6 L645.5 355.2 M637.5 354.3 L645.5 355.6 M651.5 357.2 L665 354.4 M652 357.6 L660 359.6" stroke="#111" stroke-width="1.1" fill="none"/>
    <circle cx="648.5" cy="356.4" r="10" fill="none" stroke="#f4f4f4" stroke-width="1.2"/>
    <circle cx="648.5" cy="356.4" r="10" fill="none" stroke="#e8202c" stroke-width="1.2" stroke-dasharray="3.93 3.93"/>
  </g>
  <!-- nav gizmo -->
  <circle cx="1050.6" cy="152" r="6.2" fill="#8cc81a"/>
  <circle cx="1059" cy="151.5" r="6" fill="#a84450"/>
  <circle cx="1050.6" cy="152" r="6.2" fill="#8cc81a" opacity=".9"/>
  <circle cx="1077" cy="184.3" r="6" fill="#3a6cae"/>
  <circle cx="1104" cy="151.6" r="7.2" fill="#5f8c20"/>
  <text x="1102.6" y="155.4" font-size="10.5" font-family="Liberation Sans" text-anchor="middle" fill="#1c2c08">Y</text>
  <path d="M1077 152 V120" stroke="#2d8cf5" stroke-width="2"/>
  <path d="M1077 152 H1095" stroke="#f0364e" stroke-width="2"/>
  <circle cx="1077.2" cy="119.6" r="7.6" fill="#2d8cf5"/>
  <circle cx="1096" cy="152.2" r="7.6" fill="#f8365a"/>
  <text x="1077.2" y="123.4" font-size="10.5" font-family="Liberation Sans" text-anchor="middle" fill="#0c1c30" stroke="#0c1c30" stroke-width=".35">Z</text>
  <text x="1096" y="156" font-size="10.5" font-family="Liberation Sans" text-anchor="middle" fill="#3a0810" stroke="#3a0810" stroke-width=".35">X</text>
    <circle cx="1096" cy="152.2" r="7.6" fill="#f8365a" opacity=".0"/>
  <!-- nav buttons -->
  <g fill="rgba(68,68,68,.86)"><circle cx="1104" cy="206.7" r="13.8"/><circle cx="1104" cy="237.2" r="13.8"/><circle cx="1104" cy="267.7" r="13.8"/><circle cx="1104" cy="297.9" r="13.8"/></g>
  <!-- zoom -->
  <g transform="translate(1094.8,197)"><path d="M6.6 12.6 L1.8 17.4" stroke="#dadada" stroke-width="2.1" stroke-linecap="round"/><circle cx="10.7" cy="8.7" r="6.3" fill="#dadada"/><path d="M10.7 5.1 V12.3 M7.1 8.7 H14.3" stroke="#3c3c3c" stroke-width="1.25"/></g>
  <!-- hand -->
  <g transform="translate(1095.6,228.3) scale(1.06)"><g stroke="#d6d6d6" stroke-width="2" stroke-linecap="round" fill="none"><path d="M4.7 3.4 L5.6 9.5 M7.8 1.8 L8 9 M10.8 2.4 L10.3 9 M13.9 5.6 L12.6 10.4 M1.3 8.8 L4.8 12.4"/></g><path d="M4.5 8.4 L12.9 8.8 L13.2 11.4 C12.7 14.6 10.7 16.1 8.4 16.1 C6 16.1 4.2 14.6 3.5 12 Z" fill="#d6d6d6"/></g>
  <!-- camera -->
  <g transform="translate(1095,259)" fill="#dadada"><circle cx="5" cy="4.6" r="3.2"/><circle cx="11.6" cy="3.8" r="3.8"/><rect x="2.4" y="8.4" width="11" height="7.6" rx="1"/><path d="M13.6 11 L17.6 9 V15.6 L13.6 13.6Z"/><circle cx="5" cy="4.6" r="1.1" fill="#3c3c3c"/><circle cx="11.6" cy="3.8" r="1.3" fill="#3c3c3c"/></g>
  <!-- ortho grid -->
  <g transform="translate(1095,290)" stroke="#dadada" stroke-width="1.2" fill="none"><path d="M3.6 1.4 H14.4 L17.4 15 H0.6 Z M2.6 5.8 H15.4 M1.6 10.2 H16.4 M7.2 1.4 L6 15 M10.8 1.4 L12 15"/></g>
  <!-- HDRI ball -->
  <g clip-path="url(#hb)">
    <rect x="940" y="358" width="78" height="78" fill="#e4ebf5"/>
    <g filter="url(#b2)">
      <ellipse cx="980" cy="386" rx="14" ry="8" fill="#ffffff"/>
      <path d="M946.500 386 A33.500 33.500 0 0 1 986 363.500" stroke="#4f6a34" stroke-width="5" fill="none" stroke-dasharray="10 3 7 2 12 4"/>
      <path d="M953 375 A28 28 0 0 1 990 367" stroke="#b9c9dc" stroke-width="3" fill="none"/>
      <path d="M988 363.500 A34 34 0 0 1 1010 382" stroke="#7f9d86" stroke-width="4" fill="none" stroke-dasharray="5 3"/>
      <path d="M990 371 L1000 374 L1011 388 L1016 398 L998 400 L993 394 L999 387 L992 380 Z" fill="#789250" opacity=".85"/>
      <path d="M974 378 L984 376 L990 384 L984 390 L977 387 Z" fill="#9bb07c" opacity=".85"/>
      <path d="M945 393 L949 384 L954 388 L958 380 L964 381 L967 390 L972 386 L976 397 L945 399 Z" fill="#4f5a4a"/>
      <path d="M960 390 L968 388 L978 394 L988 396 L990 400 L960 400Z" fill="#5f7a38"/>
    </g>
    <path d="M938 399 C955 396 1000 396 1018 399 V440 H938 Z" fill="#6a5e4d" filter="url(#b2)"/>
    <g filter="url(#b2)">
      <path d="M941 396.500 L985 397.500 L984 402 L941 403 Z" fill="#2f2e29"/>
      <path d="M942 402 L976 402 L985 401 L973 410 L961 416 L950 418 L944 410 Z" fill="#554e42"/>
      <path d="M947 406 L951 404 L953 414 L949 416Z M957 407 L963 405 L965 410 L959 412Z" fill="#8d8877"/>
      <path d="M985 400.500 L998 402 L1008 414 L1006 424 L990 434 L966 434 L962 424 L972 411 Z" fill="#7f725e"/>
      <path d="M998 400 L1015 399 L1015 410 L1009 417 L1003 408 Z" fill="#7d8a4a"/>
      <path d="M944 412 C948 422 956 430 966 434 L962 436 C950 432 944 422 941 414Z" fill="#8c8a5c"/>
    </g>
    <path d="M940 358 H1018 V402 C1004 400 994 394 988 386 C980 378 964 382 954 396 L940 400Z" fill="#000" filter="url(#tree)" opacity=".5"/>
    <path d="M940 398 H1018 V436 H940Z" fill="#000" filter="url(#dirt)" opacity=".3"/>
    <circle cx="978.3" cy="396.1" r="36.4" fill="none" stroke="#86a03c" stroke-width="1.6" opacity=".55" stroke-dasharray="30 45 62 97"/>
  </g>
  <!-- material ball -->
  <circle cx="1077.3" cy="396.1" r="37.4" fill="url(#matball)"/>
</svg>
<!-- NODE EDITOR header -->
<div class="a" style="left:216.5px;top:451.5px;width:31px;height:19.5px;background:#2b2b2b;border:1px solid #3d3d3d;border-radius:4px"></div>
<svg style="left:221px;top:454px" width="15" height="15" viewBox="0 0 15 15"><circle cx="7.2" cy="7.2" r="6.3" fill="none" stroke="#e0e0e0" stroke-width="1.1"/><path d="M3.6 6 A3.8 3.8 0 0 1 5.6 3.6" stroke="#e0e0e0" stroke-width="1.3" fill="none"/><circle cx="7.6" cy="3.5" r=".9" fill="#e0e0e0"/></svg>
<svg style="left:238px;top:458px" width="8" height="6" viewBox="0 0 8 6"><path d="M1 1 L4 4.2 L7 1" stroke="#c0c0c0" stroke-width="1.3" fill="none"/></svg>
<div class="a" style="left:253px;top:451.5px;width:89px;height:19.5px;background:#2b2b2b;border:1px solid #3d3d3d;border-radius:4px"></div>
<svg style="left:258px;top:453px" width="16" height="16" viewBox="0 0 16 16"><path d="M1 4.5 V1 H4.5 M11.5 1 H15 V4.5 M15 11.5 V15 H11.5 M4.5 15 H1 V11.5" stroke="#c8c8c8" stroke-width="1.1" fill="none"/><rect x="3.8" y="3.8" width="8.4" height="8.4" fill="#dcdcdc"/></svg>
<span class="t" style="left:278.5px;top:451px;color:#e0e0e0;font-size:11.5px;letter-spacing:-0.092px;">Object</span>
<svg style="left:331px;top:458px" width="9" height="7" viewBox="0 0 9 7"><path d="M1 1 L4.5 4.6 L8 1" stroke="#c0c0c0" stroke-width="1.3" fill="none"/></svg>
<span class="t" style="left:354px;top:451px;color:#e0e0e0;font-size:11.5px;letter-spacing:-0.080px;">View</span>
<span class="t" style="left:394.6px;top:451px;color:#e0e0e0;font-size:11.5px;letter-spacing:-0.261px;">Select</span>
<span class="t" style="left:440.3px;top:451px;color:#e0e0e0;font-size:11.5px;letter-spacing:-0.490px;">Add</span>
<span class="t" style="left:474.3px;top:451px;color:#e0e0e0;font-size:11.5px;letter-spacing:-0.375px;">Node</span>
<div class="a" style="left:517px;top:455px;width:12.5px;height:12.5px;background:#537dba;border-radius:2.5px"></div>
<svg style="left:518px;top:456px" width="11" height="11" viewBox="0 0 11 11"><path d="M2 5.6 L4.4 8 L9 2.6" stroke="#fff" stroke-width="1.5" fill="none"/></svg>
<span class="t" style="left:537.5px;top:451px;color:#e8e8e8;font-size:11.5px;letter-spacing:-0.488px;">Use Nodes</span>
<div class="a" style="left:615.5px;top:451.5px;width:80px;height:19.5px;background:#2b2b2b;border:1px solid #3d3d3d;border-radius:4px"></div>
<span class="t" style="left:623.8px;top:451px;color:#e0e0e0;font-size:11.5px;letter-spacing:-0.337px;">Slot 1</span>
<svg style="left:684px;top:458px" width="9" height="7" viewBox="0 0 9 7"><path d="M1 1 L4.5 4.6 L8 1" stroke="#c0c0c0" stroke-width="1.3" fill="none"/></svg>
<!-- material -->
<div class="a" style="left:702px;top:452px;width:210px;height:18.5px;background:#2b2b2b;border-radius:4px;box-shadow:0 0 0 .8px #3c3c3c"></div>
<div class="a" style="left:733px;top:452px;width:119px;height:18.5px;background:#1d1d1d"></div>
<div class="a" style="left:852px;top:452px;width:60px;height:18.5px;background:#545454;border-radius:0 4px 4px 0"></div>
<div class="a" style="left:872px;top:452px;width:1px;height:18.5px;background:#3a3a3a"></div>
<div class="a" style="left:892.5px;top:452px;width:1px;height:18.5px;background:#3a3a3a"></div>
<svg style="left:706px;top:454px" width="15" height="15" viewBox="0 0 15 15"><circle cx="7.2" cy="7.4" r="6.2" fill="#2b2b2b" stroke="#e4e4e4" stroke-width="1.1"/><path d="M7.2 7.4 V1.2 A6.2 6.2 0 0 0 1 7.4 Z M7.2 7.4 V13.6 A6.2 6.2 0 0 0 13.4 7.4 Z" fill="#e4e4e4"/></svg>
<svg style="left:722px;top:458px" width="9" height="7" viewBox="0 0 9 7"><path d="M1 1 L4.5 4.6 L8 1" stroke="#c0c0c0" stroke-width="1.3" fill="none"/></svg>
<span class="t" style="left:739.7px;top:451px;color:#e8e8e8;font-size:11.5px;letter-spacing:-0.201px;">Material</span>
<svg style="left:855.5px;top:454px" width="14" height="15" viewBox="0 0 14 15"><path d="M7 1 C5 2.4 3 2.8 1.2 2.8 V7 C1.2 10.5 4 13 7 14.2 C10 13 12.8 10.5 12.8 7 V2.8 C11 2.8 9 2.4 7 1Z" fill="none" stroke="#9a9a9a" stroke-width="1.1"/></svg>
<svg style="left:875px;top:454px" width="15" height="15" viewBox="0 0 15 15"><rect x="1.2" y="4.6" width="8.4" height="9.2" fill="none" stroke="#e0e0e0" stroke-width="1.05"/><path d="M4.4 1 H10.4 L13.6 4.2 V10.8 H4.4 Z" fill="#545454" stroke="#e0e0e0" stroke-width="1.05" stroke-linejoin="round"/><path d="M10.2 1.2 V4.4 H13.4" fill="none" stroke="#e0e0e0" stroke-width="1"/></svg>
<svg style="left:897px;top:456px" width="10" height="10" viewBox="0 0 10 10"><path d="M1 1 L9 9 M9 1 L1 9" stroke="#e0e0e0" stroke-width="1.2"/></svg>
<svg style="left:921px;top:453px" width="15" height="16" viewBox="0 0 15 16"><path d="M8.2 1 L14 6.8 L12.4 7.2 L9.8 9.8 L9.6 13 L2 5.4 L5.2 5.2 L7.8 2.6 Z M5.6 9.4 L1 14" stroke="#b0b0b0" stroke-width="1.1" fill="none" stroke-linejoin="round"/></svg>
<!-- right side header -->
<div class="a" style="left:1044px;top:452px;width:18px;height:18px;background:#434343;border-radius:4px"></div>
<svg style="left:1046px;top:454px" width="14" height="14" viewBox="0 0 14 14"><path d="M1.6 5.2 L5.8 1 L10 5.2 M5.8 1 V10.5 Q5.8 12.6 8 12.6 H12.6" stroke="#707070" stroke-width="1.05" fill="none"/></svg>
<div class="a" style="left:1069px;top:452px;width:19px;height:18px;background:#595959;border-radius:4px 0 0 4px"></div>
<div class="a" style="left:1088px;top:452px;width:31px;height:18px;background:#2b2b2b;border-radius:0 4px 4px 0"></div>
<svg style="left:1070.5px;top:453px" width="16" height="16" viewBox="0 0 16 16"><path d="M2.37 6.37 L5.62 3.12 A5.2 5.2 0 0 1 12.98 10.48 L9.73 13.73 L7.61 11.61 L10.86 8.36 A2.2 2.2 0 0 0 7.74 5.24 L4.49 8.49 Z" stroke="#9c9c9c" stroke-width="1.1" fill="none" stroke-linejoin="round"/></svg>
<svg style="left:1091px;top:453px" width="16" height="16" viewBox="0 0 16 16"><path d="M4.4 8 V15 M11.5 1 V15 M8 4.4 H15 M1 11.5 H15" stroke="#dcdcdc" stroke-width="1.05" fill="none"/><rect x="1.9" y="2.2" width="5" height="4.6" fill="#e6e6e6"/></svg>
<svg style="left:1109px;top:458px" width="8" height="6" viewBox="0 0 8 6"><path d="M1 1 L4 4.2 L7 1" stroke="#c8c8c8" stroke-width="1.3" fill="none"/></svg>
<!-- region toggles -->
<div class="a" style="left:209px;top:488px;width:7px;height:14px;background:#282828;border-radius:0 4px 4px 0"></div>
<svg style="left:210px;top:491px" width="5" height="8" viewBox="0 0 5 8"><path d="M0.5 0.5 L4 4 L0.5 7.5" stroke="#8c8c8c" stroke-width="1" fill="none"/></svg>
<div class="a" style="left:1120.5px;top:488px;width:7px;height:14px;background:#282828;border-radius:4px 0 0 4px"></div>
<svg style="left:1122px;top:491px" width="5" height="8" viewBox="0 0 5 8"><path d="M4.5 0.5 L1 4 L4.5 7.5" stroke="#b8b8b8" stroke-width="1" fill="none"/></svg>
<!-- NODES -->
<div class="a" style="left:209px;top:473px;width:919px;height:273.8px;overflow:hidden"><div class="a" style="left:-209px;top:-473px;width:1366px;height:768px">
<svg style="left:0;top:0" width="1366" height="768" viewBox="0 0 1366 768"><path d="M427.9 518.9 C434 522 477 579.6 482.4 583.3" stroke="#1c1c1c" stroke-width="4.6" fill="none"/><path d="M427.9 518.9 C434 522 477 579.6 482.4 583.3" stroke="#8c8c8c" stroke-width="2.8" fill="none"/><path d="M665.5 522.3 C672 523.4 698 540 703.7 541.5" stroke="#1c1c1c" stroke-width="4.6" fill="none"/><path d="M665.5 522.3 C672 523.4 698 540 703.7 541.5" stroke="#8c8c8c" stroke-width="2.8" fill="none"/></svg>
<div class="a" style="left:245.2px;top:492px;width:182.7px;height:193px;background:#3f3f3f;border-radius:4px;box-shadow:0 2px 5px rgba(0,0,0,.55)"></div>
<div class="a" style="left:245.2px;top:492px;width:182.7px;height:15px;background:#a5633a;border-radius:4px 4px 0 0;"></div>
<svg style="left:252.6px;top:497.7px" width="6" height="5" viewBox="0 0 6 5"><path d="M0.3 0.3 H5.7 L3 4.7Z" fill="#e0e0e0"/></svg>
<span class="t" style="left:263.2px;top:490px;color:#eaeaea;font-size:9.6px;letter-spacing:-0.360px;"><span class="sh">c938c359e852d1418da4cc764d77178..</span></span>
<span class="t" style="left:393.2px;top:509px;color:#dcdcdc;font-size:9.6px;letter-spacing:-0.308px;"><span class="sh">Color</span></span>
<div class="a" style="left:424.29999999999995px;top:515.3px;width:7.2px;height:7.2px;border-radius:50%;background:#c7c729;border:0.8px solid #1a1a1a"></div>
<span class="t" style="left:391.1px;top:526px;color:#dcdcdc;font-size:9.6px;letter-spacing:-0.209px;"><span class="sh">Alpha</span></span>
<div class="a" style="left:424.29999999999995px;top:532.4px;width:7.2px;height:7.2px;border-radius:50%;background:#a1a1a1;border:0.8px solid #1a1a1a"></div>
<div class="a" style="left:254px;top:552.2px;width:166px;height:13.7px;background:#2b2b2b;border-radius:3px;box-shadow:0 0 0 .6px #4a4a4a"></div>
<div class="a" style="left:276.6px;top:552.2px;width:82.8px;height:13.7px;background:#1d1d1d;border-radius:0;"></div>
<div class="a" style="left:359.4px;top:552.2px;width:60.6px;height:13.7px;background:#545454;border-radius:0 3px 3px 0;"></div>
<div class="a" style="left:374.6px;top:552.2px;width:0.8px;height:13.7px;background:#3c3c3c;border-radius:0;"></div>
<div class="a" style="left:390px;top:552.2px;width:0.8px;height:13.7px;background:#3c3c3c;border-radius:0;"></div>
<div class="a" style="left:405.4px;top:552.2px;width:0.8px;height:13.7px;background:#3c3c3c;border-radius:0;"></div>
<svg style="left:256.5px;top:553.5px" width="11" height="11" viewBox="0 0 11 11"><rect x=".5" y=".5" width="10" height="10" fill="#8a8a8a" stroke="#d0d0d0" stroke-width=".9"/><path d="M1 10 L4.2 4.6 L7.4 10Z" fill="#f0f0f0"/><circle cx="7.6" cy="3.4" r="1.1" fill="#f0f0f0"/></svg>
<svg style="left:268.5px;top:556.7px" width="7" height="5" viewBox="0 0 7 5"><path d="M0.8 0.8 L3.5 3.6 L6.2 0.8" stroke="#c0c0c0" stroke-width="1.1" fill="none"/></svg>
<span class="t" style="left:283.2px;top:549px;color:#eaeaea;font-size:9.6px;letter-spacing:-0.353px;">c938c359e852d1..</span>
<svg style="left:361.5px;top:553.5px" width="11" height="11" viewBox="0 0 11 11"><path d="M5.5 .8 C4 1.8 2.5 2.1 1 2.1 V5.2 C1 7.8 3.2 9.6 5.5 10.4 C7.8 9.6 10 7.8 10 5.2 V2.1 C8.5 2.1 7 1.8 5.5 .8Z" fill="none" stroke="#8c8c8c" stroke-width="1"/></svg>
<svg style="left:377px;top:553.5px" width="11" height="11" viewBox="0 0 11 11"><rect x="1" y="3.4" width="6" height="6.8" fill="none" stroke="#dcdcdc" stroke-width=".85"/><path d="M3.2 .8 H7.6 L9.9 3.1 V7.9 H3.2 Z" fill="#545454" stroke="#dcdcdc" stroke-width=".85" stroke-linejoin="round"/><path d="M7.4 1 V3.3 H9.7" fill="none" stroke="#dcdcdc" stroke-width=".8"/></svg>
<svg style="left:392.3px;top:553.8px" width="11" height="11" viewBox="0 0 11 11"><path d="M.6 1 H4.2 L5 2.2 H10.4 V3.6 H.6Z" fill="#a8a8a8"/><path d="M.6 4.2 H10.4 V10 H.6Z" fill="#e0e0e0"/></svg>
<svg style="left:409px;top:555.5px" width="8" height="8" viewBox="0 0 8 8"><path d="M1 1 L7 7 M7 1 L1 7" stroke="#dcdcdc" stroke-width="1.1"/></svg>
<div class="a" style="left:254px;top:571.2px;width:166px;height:13.4px;background:#2b2b2b;border-radius:3px;box-shadow:0 0 0 .6px #3a3a3a"></div>
<span class="t" style="left:259.5px;top:568px;color:#dcdcdc;font-size:9.6px;letter-spacing:-0.245px;"><span class="sh">Linear</span></span>
<svg style="left:412px;top:575.7px" width="7" height="5" viewBox="0 0 7 5"><path d="M0.8 0.8 L3.5 3.6 L6.2 0.8" stroke="#c0c0c0" stroke-width="1.1" fill="none"/></svg>
<div class="a" style="left:254px;top:590.2px;width:166px;height:13.6px;background:#2b2b2b;border-radius:3px;box-shadow:0 0 0 .6px #3a3a3a"></div>
<span class="t" style="left:259.5px;top:587px;color:#dcdcdc;font-size:9.6px;letter-spacing:-0.350px;"><span class="sh">Flat</span></span>
<svg style="left:412px;top:594.8px" width="7" height="5" viewBox="0 0 7 5"><path d="M0.8 0.8 L3.5 3.6 L6.2 0.8" stroke="#c0c0c0" stroke-width="1.1" fill="none"/></svg>
<div class="a" style="left:254px;top:610px;width:166px;height:13.2px;background:#2b2b2b;border-radius:3px;box-shadow:0 0 0 .6px #3a3a3a"></div>
<span class="t" style="left:259.5px;top:606px;color:#dcdcdc;font-size:9.6px;letter-spacing:-0.390px;"><span class="sh">Repeat</span></span>
<svg style="left:412px;top:614.4px" width="7" height="5" viewBox="0 0 7 5"><path d="M0.8 0.8 L3.5 3.6 L6.2 0.8" stroke="#c0c0c0" stroke-width="1.1" fill="none"/></svg>
<div class="a" style="left:254px;top:629px;width:166px;height:13.2px;background:#2b2b2b;border-radius:3px;box-shadow:0 0 0 .6px #3a3a3a"></div>
<span class="t" style="left:259.5px;top:625px;color:#dcdcdc;font-size:9.6px;letter-spacing:-0.442px;"><span class="sh">Single Image</span></span>
<svg style="left:412px;top:633.4px" width="7" height="5" viewBox="0 0 7 5"><path d="M0.8 0.8 L3.5 3.6 L6.2 0.8" stroke="#c0c0c0" stroke-width="1.1" fill="none"/></svg>
<span class="t" style="left:259.5px;top:644px;color:#dcdcdc;font-size:9.6px;letter-spacing:-0.563px;"><span class="sh">Color Space</span></span>
<div class="a" style="left:341.3px;top:648.2px;width:78.7px;height:12.8px;background:#2b2b2b;border-radius:3px;box-shadow:0 0 0 .6px #3a3a3a"></div>
<span class="t" style="left:345.9px;top:644px;color:#dcdcdc;font-size:9.6px;letter-spacing:-0.873px;"><span class="sh">sRGB</span></span>
<svg style="left:412px;top:652.1px" width="7" height="5" viewBox="0 0 7 5"><path d="M0.8 0.8 L3.5 3.6 L6.2 0.8" stroke="#c0c0c0" stroke-width="1.1" fill="none"/></svg>
<span class="t" style="left:259.5px;top:663px;color:#dcdcdc;font-size:9.6px;letter-spacing:-0.167px;"><span class="sh">Vector</span></span>
<div class="a" style="left:241.6px;top:669.3px;width:7.2px;height:7.2px;border-radius:50%;background:#6363c7;border:0.8px solid #1a1a1a"></div>
<div class="a" style="left:483.2px;top:495.6px;width:182.4px;height:260px;background:#3f3f3f;border-radius:4px;box-shadow:0 2px 5px rgba(0,0,0,.55)"></div>
<div class="a" style="left:483.2px;top:495.6px;width:182.4px;height:15px;background:#2e9060;border-radius:4px 4px 0 0;"></div>
<svg style="left:490.2px;top:500.7px" width="6" height="5" viewBox="0 0 6 5"><path d="M0.3 0.3 H5.7 L3 4.7Z" fill="#e0e0e0"/></svg>
<span class="t" style="left:500.3px;top:493px;color:#eaeaea;font-size:9.6px;letter-spacing:-0.586px;"><span class="sh">Principled BSDF</span></span>
<span class="t" style="left:629.4px;top:512px;color:#dcdcdc;font-size:9.6px;letter-spacing:-1.048px;"><span class="sh">BSDF</span></span>
<div class="a" style="left:661.9px;top:518.6999999999999px;width:7.2px;height:7.2px;border-radius:50%;background:#63c763;border:0.8px solid #1a1a1a"></div>
<div class="a" style="left:491.4px;top:539.1px;width:165.8px;height:12.8px;background:#2b2b2b;border-radius:3px;box-shadow:0 0 0 .6px #3a3a3a"></div>
<span class="t" style="left:496.1px;top:535px;color:#dcdcdc;font-size:9.6px;letter-spacing:-1.143px;"><span class="sh">GGX</span></span>
<svg style="left:649.5px;top:543.2px" width="7" height="5" viewBox="0 0 7 5"><path d="M0.8 0.8 L3.5 3.6 L6.2 0.8" stroke="#c0c0c0" stroke-width="1.1" fill="none"/></svg>
<div class="a" style="left:491.4px;top:558.2px;width:165.8px;height:12.8px;background:#2b2b2b;border-radius:3px;box-shadow:0 0 0 .6px #3a3a3a"></div>
<span class="t" style="left:496.1px;top:554px;color:#dcdcdc;font-size:9.6px;letter-spacing:-0.333px;"><span class="sh">Christensen-Burley</span></span>
<svg style="left:649.5px;top:562.3000000000001px" width="7" height="5" viewBox="0 0 7 5"><path d="M0.8 0.8 L3.5 3.6 L6.2 0.8" stroke="#c0c0c0" stroke-width="1.1" fill="none"/></svg>
<span class="t" style="left:496.1px;top:573px;color:#dcdcdc;font-size:9.6px;letter-spacing:-0.387px;"><span class="sh">Base Color</span></span>
<div class="a" style="left:478.79999999999995px;top:579.6999999999999px;width:7.2px;height:7.2px;border-radius:50%;background:#c7c729;border:0.8px solid #1a1a1a"></div>
<div class="a" style="left:491.4px;top:594.3px;width:165.8px;height:12.5px;background:#595959;border-radius:3px;overflow:hidden"></div>
<span class="t" style="left:498.2px;top:590px;color:#e4e4e4;font-size:9.6px;letter-spacing:-0.453px;"><span class="sh">Subsurface</span></span>
<span class="t" style="left:628.5px;top:590px;color:#e4e4e4;font-size:9.6px;letter-spacing:-0.343px;"><span class="sh">0.000</span></span>
<div class="a" style="left:478.79999999999995px;top:596.8px;width:7.2px;height:7.2px;border-radius:50%;background:#a1a1a1;border:0.8px solid #1a1a1a"></div>
<div class="a" style="left:491.4px;top:611px;width:165.8px;height:12.3px;background:#2b2b2b;border-radius:3px;box-shadow:0 0 0 .6px #3a3a3a"></div>
<span class="t" style="left:496.1px;top:607px;color:#dcdcdc;font-size:9.6px;letter-spacing:-0.445px;"><span class="sh">Subsurface Radius</span></span>
<svg style="left:649.5px;top:614.8px" width="7" height="5" viewBox="0 0 7 5"><path d="M0.8 0.8 L3.5 3.6 L6.2 0.8" stroke="#c0c0c0" stroke-width="1.1" fill="none"/></svg>
<div class="a" style="left:478.79999999999995px;top:613.4px;width:7.2px;height:7.2px;border-radius:50%;background:#6363c7;border:0.8px solid #1a1a1a"></div>
<span class="t" style="left:496.1px;top:623px;color:#dcdcdc;font-size:9.6px;letter-spacing:-0.414px;"><span class="sh">Subsurface Color</span></span>
<div class="a" style="left:578.1px;top:627.3px;width:79.1px;height:12.6px;background:#e7e7e7;border-radius:3px;"></div>
<div class="a" style="left:478.79999999999995px;top:629.9px;width:7.2px;height:7.2px;border-radius:50%;background:#c7c729;border:0.8px solid #1a1a1a"></div>
<div class="a" style="left:491.4px;top:644.3px;width:165.8px;height:12.5px;background:#595959;border-radius:3px;overflow:hidden"></div>
<span class="t" style="left:498.2px;top:640px;color:#e4e4e4;font-size:9.6px;letter-spacing:-0.279px;"><span class="sh">Metallic</span></span>
<span class="t" style="left:628.5px;top:640px;color:#e4e4e4;font-size:9.6px;letter-spacing:-0.343px;"><span class="sh">0.000</span></span>
<div class="a" style="left:478.79999999999995px;top:646.8px;width:7.2px;height:7.2px;border-radius:50%;background:#a1a1a1;border:0.8px solid #1a1a1a"></div>
<div class="a" style="left:491.4px;top:661px;width:165.8px;height:12.5px;background:#595959;border-radius:3px;overflow:hidden"></div>
<div class="a" style="left:491.4px;top:661px;width:81.6px;height:12.5px;background:#537dba;border-radius:3px 0 0 3px;"></div>
<span class="t" style="left:498.2px;top:657px;color:#e4e4e4;font-size:9.6px;letter-spacing:-0.409px;"><span class="sh">Specular</span></span>
<span class="t" style="left:628.5px;top:657px;color:#e4e4e4;font-size:9.6px;letter-spacing:-0.343px;"><span class="sh">0.500</span></span>
<div class="a" style="left:478.79999999999995px;top:663.5px;width:7.2px;height:7.2px;border-radius:50%;background:#a1a1a1;border:0.8px solid #1a1a1a"></div>
<div class="a" style="left:491.4px;top:677.8px;width:165.8px;height:12.5px;background:#595959;border-radius:3px;overflow:hidden"></div>
<span class="t" style="left:498.2px;top:674px;color:#e4e4e4;font-size:9.6px;letter-spacing:-0.400px;"><span class="sh">Specular Tint</span></span>
<span class="t" style="left:628.5px;top:674px;color:#e4e4e4;font-size:9.6px;letter-spacing:-0.343px;"><span class="sh">0.000</span></span>
<div class="a" style="left:478.79999999999995px;top:680.3px;width:7.2px;height:7.2px;border-radius:50%;background:#a1a1a1;border:0.8px solid #1a1a1a"></div>
<div class="a" style="left:491.4px;top:694.3px;width:165.8px;height:12.5px;background:#595959;border-radius:3px;overflow:hidden"></div>
<div class="a" style="left:491.4px;top:694.3px;width:64.5px;height:12.5px;background:#537dba;border-radius:3px 0 0 3px;"></div>
<span class="t" style="left:498.2px;top:690px;color:#e4e4e4;font-size:9.6px;letter-spacing:-0.505px;"><span class="sh">Roughness</span></span>
<span class="t" style="left:628.5px;top:690px;color:#e4e4e4;font-size:9.6px;letter-spacing:-0.343px;"><span class="sh">0.400</span></span>
<div class="a" style="left:478.79999999999995px;top:696.8px;width:7.2px;height:7.2px;border-radius:50%;background:#a1a1a1;border:0.8px solid #1a1a1a"></div>
<div class="a" style="left:491.4px;top:711px;width:165.8px;height:12.5px;background:#595959;border-radius:3px;overflow:hidden"></div>
<span class="t" style="left:498.2px;top:707px;color:#e4e4e4;font-size:9.6px;letter-spacing:-0.279px;"><span class="sh">Anisotropic</span></span>
<span class="t" style="left:628.5px;top:707px;color:#e4e4e4;font-size:9.6px;letter-spacing:-0.343px;"><span class="sh">0.000</span></span>
<div class="a" style="left:478.79999999999995px;top:713.5px;width:7.2px;height:7.2px;border-radius:50%;background:#a1a1a1;border:0.8px solid #1a1a1a"></div>
<div class="a" style="left:491.4px;top:727.5px;width:165.8px;height:12.5px;background:#595959;border-radius:3px;overflow:hidden"></div>
<span class="t" style="left:498.2px;top:724px;color:#e4e4e4;font-size:9.6px;letter-spacing:-0.298px;"><span class="sh">Anisotropic Rotation</span></span>
<span class="t" style="left:628.5px;top:724px;color:#e4e4e4;font-size:9.6px;letter-spacing:-0.343px;"><span class="sh">0.000</span></span>
<div class="a" style="left:478.79999999999995px;top:730.0px;width:7.2px;height:7.2px;border-radius:50%;background:#a1a1a1;border:0.8px solid #1a1a1a"></div>
<div class="a" style="left:491.4px;top:744px;width:165.8px;height:12.5px;background:#595959;border-radius:3px;overflow:hidden"></div>
<span class="t" style="left:498.2px;top:740px;color:#e4e4e4;font-size:9.6px;letter-spacing:-0.750px;"><span class="sh">Sheen</span></span>
<span class="t" style="left:628.5px;top:740px;color:#e4e4e4;font-size:9.6px;letter-spacing:-0.343px;"><span class="sh">0.000</span></span>
<div class="a" style="left:478.79999999999995px;top:746.5px;width:7.2px;height:7.2px;border-radius:50%;background:#a1a1a1;border:0.8px solid #1a1a1a"></div>
<div class="a" style="left:704.2px;top:495.6px;width:106px;height:91px;background:#3f3f3f;border-radius:4px;box-shadow:0 2px 5px rgba(0,0,0,.55)"></div>
<div class="a" style="left:704.2px;top:495.6px;width:106px;height:15px;background:#83303a;border-radius:4px 4px 0 0;"></div>
<svg style="left:711px;top:500.7px" width="6" height="5" viewBox="0 0 6 5"><path d="M0.3 0.3 H5.7 L3 4.7Z" fill="#e0e0e0"/></svg>
<span class="t" style="left:721.3px;top:493px;color:#eaeaea;font-size:9.6px;letter-spacing:-0.246px;"><span class="sh">Material Output</span></span>
<div class="a" style="left:711.9px;top:515.6px;width:89.7px;height:12.8px;background:#2b2b2b;border-radius:3px;box-shadow:0 0 0 .6px #3a3a3a"></div>
<span class="t" style="left:717px;top:512px;color:#dcdcdc;font-size:9.6px;letter-spacing:0.009px;"><span class="sh">All</span></span>
<svg style="left:793.5px;top:519.5px" width="7" height="5" viewBox="0 0 7 5"><path d="M0.8 0.8 L3.5 3.6 L6.2 0.8" stroke="#c0c0c0" stroke-width="1.1" fill="none"/></svg>
<span class="t" style="left:717px;top:531px;color:#dcdcdc;font-size:9.6px;letter-spacing:-0.383px;"><span class="sh">Surface</span></span>
<div class="a" style="left:700.1px;top:537.9px;width:7.2px;height:7.2px;border-radius:50%;background:#63c763;border:0.8px solid #1a1a1a"></div>
<span class="t" style="left:717px;top:548px;color:#dcdcdc;font-size:9.6px;letter-spacing:-0.133px;"><span class="sh">Volume</span></span>
<div class="a" style="left:700.1px;top:554.3px;width:7.2px;height:7.2px;border-radius:50%;background:#63c763;border:0.8px solid #1a1a1a"></div>
<span class="t" style="left:717px;top:565px;color:#dcdcdc;font-size:9.6px;letter-spacing:-0.319px;"><span class="sh">Displacement</span></span>
<div class="a" style="left:700.1px;top:571.4px;width:7.2px;height:7.2px;border-radius:50%;background:#6363c7;border:0.8px solid #1a1a1a"></div>
<span class="t" style="left:238.2px;top:703px;color:#ffffff;font-size:12px;letter-spacing:-0.311px;">Material</span>
</div></div>
<!-- OUTLINER -->
<div class="a" style="left:1139px;top:54px;width:30px;height:18px;background:#2b2b2b;border:1px solid #3a3a3a;border-radius:4px"></div>
<svg style="left:1142px;top:56px" width="16" height="15" viewBox="0 0 16 15"><rect x=".5" y=".5" width="5" height="2.6" fill="#e0e0e0"/><path d="M2.6 3 V12.2 H6 M2.6 7.4 H6" stroke="#b0b0b0" stroke-width="1" fill="none"/><rect x="7" y="5.8" width="7.5" height="2.8" fill="#e0e0e0"/><rect x="7" y="10.6" width="7.5" height="2.8" fill="#e0e0e0"/></svg>
<svg style="left:1160px;top:60px" width="8" height="6" viewBox="0 0 8 6"><path d="M1 1 L4 4.2 L7 1" stroke="#c0c0c0" stroke-width="1.3" fill="none"/></svg>
<div class="a" style="left:1176px;top:54px;width:30px;height:18px;background:#2b2b2b;border:1px solid #3a3a3a;border-radius:4px"></div>
<svg style="left:1179px;top:55px" width="16" height="16" viewBox="0 0 16 16"><path d="M1.2 5 V14.8 H11 M3.2 3 V12.8 H13" stroke="#a8a8a8" stroke-width=".8" fill="none"/><rect x="5.4" y="1.2" width="9.6" height="9.6" fill="none" stroke="#e0e0e0" stroke-width="1.1"/><path d="M6 10.2 L9.2 5.2 L11.6 8.6 L12.6 7.6 L14.4 10.2Z" fill="#e0e0e0"/><rect x="12" y="2.8" width="1.6" height="1.6" fill="#e0e0e0"/></svg>
<svg style="left:1197px;top:60px" width="8" height="6" viewBox="0 0 8 6"><path d="M1 1 L4 4.2 L7 1" stroke="#c0c0c0" stroke-width="1.3" fill="none"/></svg>
<div class="a" style="left:1224px;top:54px;width:109px;height:18px;background:#1d1d1d;border-radius:4px"></div>
<svg style="left:1227px;top:55px" width="16" height="16" viewBox="0 0 16 16"><circle cx="10" cy="6" r="4.2" stroke="#e0e0e0" stroke-width="1.2" fill="none"/><path d="M7 9 L1.2 14.8" stroke="#e0e0e0" stroke-width="1.3"/></svg>
<div class="a" style="left:1351px;top:54px;width:20px;height:18px;background:#2b2b2b;border:1px solid #3a3a3a;border-radius:4px"></div>
<svg style="left:1355px;top:56px" width="16" height="16" viewBox="0 0 16 16"><path d="M1 1.5 H14 L9 7.5 V12 L6 14.5 V7.5 Z" stroke="#e0e0e0" stroke-width="1.2" fill="none" stroke-linejoin="round"/></svg>
<!-- rows -->
<svg style="left:1153px;top:81px" width="14" height="14" viewBox="0 0 14 14"><rect x=".6" y=".6" width="12.8" height="3" fill="none" stroke="#dcdcdc" stroke-width="1.1"/><path d="M1.6 3.6 V12.6 H12.4 V3.6" stroke="#dcdcdc" stroke-width="1.1" fill="none"/><rect x="5.2" y="6" width="3.6" height="1.6" fill="#dcdcdc"/></svg>
<span class="t" style="left:1174.3px;top:78px;color:#d0d0d0;font-size:11.5px;letter-spacing:-0.207px;">Scene Collection</span>
<svg style="left:1156.5px;top:104.5px" width="7" height="7" viewBox="0 0 7 7"><path d="M.3 .5 H6.3 L3.3 6.5Z" fill="#c0c0c0"/></svg>
<div class="a" style="left:1175px;top:102px;width:10px;height:10px;background:#e6e6e6;border-radius:1.5px"></div>
<svg style="left:1175px;top:102px" width="10" height="10" viewBox="0 0 10 10"><path d="M1.6 5 L4 7.6 L8.6 2.2" stroke="#222" stroke-width="1.6" fill="none"/></svg>
<div class="a" style="left:1190px;top:98px;width:20px;height:18px;background:#4c4c4c;border-radius:4px"></div>
<svg style="left:1193px;top:100px" width="14" height="14" viewBox="0 0 14 14"><rect x=".6" y=".6" width="12.8" height="3" fill="none" stroke="#e4e4e4" stroke-width="1.1"/><path d="M1.6 3.6 V12.6 H12.4 V3.6" stroke="#e4e4e4" stroke-width="1.1" fill="none"/><rect x="5.2" y="6" width="3.6" height="1.6" fill="#e4e4e4"/></svg>
<span class="t" style="left:1214.4px;top:98px;color:#d0d0d0;font-size:11.5px;letter-spacing:-0.050px;">Collection</span>
<!-- hierarchy lines -->
<div class="a" style="left:1179px;top:113px;width:1px;height:55px;background:#7a7a7a"></div>
<div class="a" style="left:1179px;top:127px;width:14px;height:1px;background:#7a7a7a"></div>
<div class="a" style="left:1179px;top:147px;width:14px;height:1px;background:#7a86a0"></div>
<div class="a" style="left:1179px;top:167px;width:14px;height:1px;background:#7a7a7a"></div>
<svg style="left:1177px;top:124.5px" width="7" height="7" viewBox="0 0 7 7"><path d="M.5 .3 L6.5 3.4 L.5 6.5Z" fill="#c0c0c0"/></svg>
<svg style="left:1177px;top:144px" width="7" height="7" viewBox="0 0 7 7"><path d="M.5 .3 L6.5 3.4 L.5 6.5Z" fill="#d0d0d0"/></svg>
<svg style="left:1177px;top:164px" width="7" height="7" viewBox="0 0 7 7"><path d="M.5 .3 L6.5 3.4 L.5 6.5Z" fill="#c0c0c0"/></svg>
<!-- camera -->
<svg style="left:1192px;top:119px" width="16" height="16" viewBox="0 0 16 16" fill="#e8924a"><circle cx="4" cy="4.8" r="3.4"/><circle cx="10.6" cy="3.8" r="3.8"/><rect x="2" y="8.6" width="10" height="6.8" rx="1"/><path d="M12.4 11 L15.8 9.2 V15 L12.4 13.2Z"/><circle cx="4" cy="4.8" r="1.1" fill="#282828"/><circle cx="10.6" cy="3.8" r="1.3" fill="#282828"/><rect x="3.6" y="10.4" width="3" height="1.2" fill="#282828"/></svg>
<span class="t" style="left:1214.4px;top:118px;color:#d0d0d0;font-size:11.5px;letter-spacing:-0.384px;">Camera</span>
<div class="a" style="left:1273px;top:118px;width:20px;height:18px;background:#565656;border-radius:4px"></div>
<svg style="left:1275px;top:120px" width="16" height="15" viewBox="0 0 16 15" fill="none" stroke="#1fc7a0" stroke-width="1.2"><path d="M2.8 7.6 C.2 6.6 .6 2.8 3.6 2.8 C4.6 2.8 5.2 3.2 5.6 3.8 C6 1.8 7.6 .8 9.6 .8 C12.6 .8 13.8 3 13.4 5 C13.2 6.4 12.4 7.2 11.2 7.6 Z"/><rect x="3.6" y="9.4" width="8" height="4.8"/><path d="M11.6 11 L15 9.2 V14.4 L11.6 12.6 M3.6 11.8 H1 M5.6 11.8 H7"/><circle cx="10" cy="4" r=".6"/></svg>
<!-- cube -->
<div class="a" style="left:1190px;top:138px;width:20px;height:18px;background:rgba(255,255,255,.22);border-radius:4px"></div>
<svg style="left:1193px;top:140px" width="14" height="14" viewBox="0 0 14 14"><path d="M1 1.2 H13 L7 13Z M4.6 3.6 L7 8.6 L9.4 3.6Z" fill="#e8924a" fill-rule="evenodd"/></svg>
<span class="t" style="left:1214.4px;top:138px;color:#ffaf3c;font-size:11.5px;letter-spacing:-0.625px;">Cube</span>
<svg style="left:1261.5px;top:139.5px" width="15" height="15" viewBox="0 0 15 15" fill="none" stroke="#1fc7a0" stroke-width="1.2"><path d="M2.4 2.6 H12.6 M2.2 3.4 L6.8 12 M12.8 3.4 L8.2 12"/><rect x=".7" y=".9" width="3.2" height="3.2" fill="#3b5689"/><rect x="11.1" y=".9" width="3.2" height="3.2" fill="#3b5689"/><rect x="5.9" y="10.9" width="3.2" height="3.2" fill="#3b5689"/></svg>
<!-- light -->
<div class="a" style="left:1130px;top:157px;width:236px;height:15px;overflow:hidden"><div class="a" style="left:-1130px;top:-157px;width:1366px;height:768px">
<svg style="left:1193.5px;top:158.5px" width="13" height="16" viewBox="0 0 13 16"><circle cx="6.5" cy="6.3" r="6.2" fill="#e8924a"/><rect x="3.6" y="12.8" width="5.8" height="1.4" fill="#e8924a"/><path d="M3.6 6.4 V9 M9.4 6.4 V9 M3.6 8 H9.4" stroke="#282828" stroke-width="1.1" fill="none"/></svg>
<span class="t" style="left:1214.4px;top:158px;color:#d0d0d0;font-size:11.5px;letter-spacing:-0.067px;">Light</span>
<svg style="left:1261.5px;top:159.5px" width="15" height="15" viewBox="0 0 15 15" fill="none" stroke="#1fc7a0" stroke-width="1.2"><circle cx="7.2" cy="7.2" r="6.4"/><circle cx="7.2" cy="7.2" r="1" fill="#1fc7a0"/><path d="M7.2 8.4 V12"/></svg>
</div></div>
<!-- eyes -->
<svg style="left:1341.7px;top:101.5px" width="14" height="10" viewBox="0 0 14 10"><path d="M.2 5 C3 .3 11 .3 13.8 5 C11 9.7 3 9.7 .2 5Z" fill="#e6e6e6"/><circle cx="7" cy="5" r="2.8" fill="#2b2b2b"/><circle cx="7" cy="5" r="1.35" fill="#e6e6e6"/></svg>
<svg style="left:1341.7px;top:121.3px" width="14" height="10" viewBox="0 0 14 10"><path d="M.2 5 C3 .3 11 .3 13.8 5 C11 9.7 3 9.7 .2 5Z" fill="#e6e6e6"/><circle cx="7" cy="5" r="2.8" fill="#282828"/><circle cx="7" cy="5" r="1.35" fill="#e6e6e6"/></svg>
<svg style="left:1341.7px;top:141.5px" width="14" height="10" viewBox="0 0 14 10"><path d="M.2 5 C3 .3 11 .3 13.8 5 C11 9.7 3 9.7 .2 5Z" fill="#e6e6e6"/><circle cx="7" cy="5" r="2.8" fill="#3b5689"/><circle cx="7" cy="5" r="1.35" fill="#e6e6e6"/></svg>
<svg style="left:1341.7px;top:160.7px" width="14" height="10" viewBox="0 0 14 10"><path d="M.2 5 C3 .3 11 .3 13.8 5 C11 9.7 3 9.7 .2 5Z" fill="#e6e6e6"/><circle cx="7" cy="5" r="2.8" fill="#282828"/><circle cx="7" cy="5" r="1.35" fill="#e6e6e6"/></svg>
<!-- PROPERTIES header -->
<div class="a" style="left:1139px;top:178px;width:30px;height:18px;background:#2b2b2b;border:1px solid #3c3c3c;border-radius:4px"></div>
<svg style="left:1142.5px;top:180px" width="15" height="14" viewBox="0 0 15 14"><rect x=".6" y=".6" width="13.8" height="5.4" rx="2.4" fill="#e4e4e4"/><rect x=".6" y="8" width="13.8" height="5.4" rx="2.4" fill="#e4e4e4"/><circle cx="11.4" cy="3.3" r="1.6" fill="#2b2b2b"/><circle cx="3.6" cy="10.7" r="1.6" fill="#2b2b2b"/></svg>
<svg style="left:1160px;top:184px" width="8" height="6" viewBox="0 0 8 6"><path d="M1 1 L4 4.2 L7 1" stroke="#c0c0c0" stroke-width="1.3" fill="none"/></svg>
<svg style="left:1184px;top:179px" width="15" height="16" viewBox="0 0 15 16"><path d="M4 1.2 L7.4 9.4 C7.4 11.4 5.8 12.4 4 12.4 C2.2 12.4 .6 11.4 .6 9.4 Z" fill="#e4e4e4"/><circle cx="12" cy="3.2" r="2" fill="#e4e4e4"/><circle cx="10.6" cy="11" r="3.4" fill="#383838" stroke="#e4e4e4" stroke-width="1.1"/><circle cx="10.6" cy="11" r="1" fill="#e4e4e4"/></svg>
<span class="t" style="left:1206.5px;top:177px;color:#e4e4e4;font-size:11.5px;letter-spacing:-0.542px;">Scene</span>
<svg style="left:1249px;top:183.5px" width="5" height="8" viewBox="0 0 5 8"><path d="M.8 .8 L4 4 L.8 7.2" stroke="#4a4a4a" stroke-width="1.2" fill="none"/></svg>
<svg style="left:1268.5px;top:179.5px" width="16" height="16" viewBox="0 0 16 16"><circle cx="7.6" cy="8" r="6" fill="none" stroke="#e4e4e4" stroke-width="1.15"/><path d="M3.2 4.2 C4.6 2.8 6.8 2.6 8.2 3.4 C8.6 4.6 7.4 5 6.8 5.8 C7.8 6.6 7.6 7.8 6.4 8 C5.4 8.2 5.8 9.8 4.6 10.2 C3.2 10 2 8.4 2.2 6.6 Z M9.2 8.4 C10.4 7.6 12.6 8.2 12.8 9.6 C12.4 11.4 11 12.8 9.2 13 C8.4 11.8 8.4 9.6 9.2 8.4Z" fill="#e4e4e4"/><path d="M.8 14.8 L3.4 12.2 M11.8 3.8 L14.6 1" stroke="#e4e4e4" stroke-width="1.1"/></svg>
<span class="t" style="left:1291.3px;top:177px;color:#e4e4e4;font-size:11.5px;letter-spacing:-0.166px;">World</span>
<svg style="left:1341px;top:179px" width="15" height="16" viewBox="0 0 15 16"><path d="M8.2 1 L14 6.8 L12.4 7.2 L9.8 9.8 L9.6 13 L2 5.4 L5.2 5.2 L7.8 2.6 Z M5.6 9.4 L1 14" stroke="#a0a0a0" stroke-width="1.1" fill="none" stroke-linejoin="round"/></svg>
<!-- world datablock -->
<div class="a" style="left:1167px;top:209px;width:190px;height:18px;background:#2b2b2b;border-radius:4px;box-shadow:0 0 0 .7px #383838"></div>
<div class="a" style="left:1198px;top:209px;width:99.5px;height:18px;background:#1d1d1d"></div>
<div class="a" style="left:1297.5px;top:209px;width:59.5px;height:18px;background:#545454;border-radius:0 4px 4px 0"></div>
<div class="a" style="left:1317px;top:209px;width:1px;height:18px;background:#404040"></div>
<div class="a" style="left:1337px;top:209px;width:1px;height:18px;background:#404040"></div>
<svg style="left:1170.5px;top:210px" width="16" height="16" viewBox="0 0 16 16"><circle cx="7.6" cy="8" r="6" fill="none" stroke="#e4e4e4" stroke-width="1.15"/><path d="M3.2 4.2 C4.6 2.8 6.8 2.6 8.2 3.4 C8.6 4.6 7.4 5 6.8 5.8 C7.8 6.6 7.6 7.8 6.4 8 C5.4 8.2 5.8 9.8 4.6 10.2 C3.2 10 2 8.4 2.2 6.6 Z M9.2 8.4 C10.4 7.6 12.6 8.2 12.8 9.6 C12.4 11.4 11 12.8 9.2 13 C8.4 11.8 8.4 9.6 9.2 8.4Z" fill="#e4e4e4"/><path d="M.8 14.8 L3.4 12.2 M11.8 3.8 L14.6 1" stroke="#e4e4e4" stroke-width="1.1"/></svg>
<svg style="left:1187.5px;top:215px" width="8" height="6" viewBox="0 0 8 6"><path d="M1 1 L4 4.2 L7 1" stroke="#c0c0c0" stroke-width="1.3" fill="none"/></svg>
<span class="t" style="left:1204.2px;top:208px;color:#e8e8e8;font-size:11.5px;letter-spacing:-0.166px;">World</span>
<svg style="left:1300.5px;top:210.5px" width="14" height="15" viewBox="0 0 14 15"><path d="M7 1 C5 2.4 3 2.8 1.2 2.8 V7 C1.2 10.5 4 13 7 14.2 C10 13 12.8 10.5 12.8 7 V2.8 C11 2.8 9 2.4 7 1Z" fill="none" stroke="#909090" stroke-width="1.1"/></svg>
<svg style="left:1320px;top:210.5px" width="15" height="15" viewBox="0 0 15 15"><rect x="1.2" y="4.6" width="8.4" height="9.2" fill="none" stroke="#e0e0e0" stroke-width="1.05"/><path d="M4.4 1 H10.4 L13.6 4.2 V10.8 H4.4 Z" fill="#545454" stroke="#e0e0e0" stroke-width="1.05" stroke-linejoin="round"/><path d="M10.2 1.2 V4.4 H13.4" fill="none" stroke="#e0e0e0" stroke-width="1"/></svg>
<svg style="left:1342.5px;top:213px" width="10" height="10" viewBox="0 0 10 10"><path d="M1 1 L9 9 M9 1 L1 9" stroke="#e0e0e0" stroke-width="1.2"/></svg>
<!-- Surface panel -->
<svg style="left:1167px;top:245px" width="7" height="6" viewBox="0 0 7 6"><path d="M.3 .3 H6.5 L3.4 5.7Z" fill="#b4b4b4"/></svg>
<span class="t" style="left:1180.5px;top:239px;color:#dedede;font-size:12px;letter-spacing:0.049px;"><span class="sh">Surface</span></span>
<svg style="left:1346.5px;top:246px" width="11" height="5" viewBox="0 0 11 5" fill="#1e1e1e"><rect x="0" y="0" width="1.8" height="1.8"/><rect x="3" y="0" width="1.8" height="1.8"/><rect x="6" y="0" width="1.8" height="1.8"/><rect x="9" y="0" width="1.8" height="1.8"/><rect x="0" y="3.1" width="1.8" height="1.8"/><rect x="3" y="3.1" width="1.8" height="1.8"/><rect x="6" y="3.1" width="1.8" height="1.8"/><rect x="9" y="3.1" width="1.8" height="1.8"/></svg>
<div class="a" style="left:1167px;top:269px;width:190px;height:18px;background:#537dba;border-radius:4px;box-shadow:0 1px 1px rgba(0,0,0,.3)"></div>
<svg style="left:1170.5px;top:270.5px" width="16" height="15" viewBox="0 0 16 15"><rect x="1.5" y=".8" width="9" height="5.4" rx="1.2" fill="#fff"/><rect x=".6" y="8.6" width="9" height="5.4" rx="1.2" fill="#fff"/><path d="M1.5 4 H10.5 M.6 11.8 H9.6" stroke="#537dba" stroke-width="1"/><path d="M10.8 2.6 C13.4 2.6 14.2 4 14.2 7 C14.2 10 13.4 11.6 10 11.6" stroke="#fff" stroke-width="1" fill="none"/></svg>
<span class="t" style="left:1243.5px;top:268px;color:#ffffff;font-size:11.5px;letter-spacing:-0.466px;"><span class="sh">Use Nodes</span></span>
<span class="t" style="left:1213.5px;top:304px;color:#e0e0e0;font-size:11.5px;letter-spacing:-0.392px;"><span class="sh">Surface</span></span>
<div class="a" style="left:1267px;top:305px;width:90px;height:18px;background:#2b2b2b;border-radius:4px;box-shadow:0 0 0 .7px #3a3a3a"></div>
<span class="t" style="left:1273.3px;top:304px;color:#e4e4e4;font-size:11.5px;letter-spacing:-0.227px;">Background</span>
<svg style="left:1343px;top:310.5px" width="8" height="8" viewBox="0 0 8 8"><circle cx="4" cy="4" r="2.4" fill="none" stroke="#e0e0e0" stroke-width="1"/></svg>
<span class="t" style="left:1224.5px;top:340px;color:#e0e0e0;font-size:11.5px;letter-spacing:-0.317px;"><span class="sh">Color</span></span>
<div class="a" style="left:1267px;top:341px;width:90px;height:18px;background:#2b2b2b;border-radius:4px;box-shadow:0 0 0 .7px #3a3a3a"></div>
<div class="a" style="left:1267px;top:341px;width:70.5px;height:18px;background:#494949;border-radius:4px 0 0 4px"></div>
<svg style="left:1343px;top:346px" width="8" height="8" viewBox="0 0 8 8"><circle cx="4" cy="4" r="2.4" fill="none" stroke="#e0e0e0" stroke-width="1"/></svg>
<span class="t" style="left:1208.4px;top:365px;color:#e0e0e0;font-size:11.5px;letter-spacing:-0.186px;"><span class="sh">Strength</span></span>
<div class="a" style="left:1267px;top:366px;width:90px;height:18px;background:#2b2b2b;border-radius:4px;box-shadow:0 0 0 .7px #3a3a3a"></div>
<div class="a" style="left:1267px;top:366px;width:70.5px;height:18px;background:#5a5a5a;border-radius:4px 0 0 4px"></div>
<span class="t" style="left:1286.5px;top:365px;color:#f0f0f0;font-size:11.5px;letter-spacing:0.224px;"><span class="sh">1.000</span></span>
<svg style="left:1343px;top:371px" width="8" height="8" viewBox="0 0 8 8"><circle cx="4" cy="4" r="2.4" fill="none" stroke="#e0e0e0" stroke-width="1"/></svg>
<!-- collapsed panels -->
<svg style="left:1167.5px;top:402px" width="6" height="8" viewBox="0 0 6 8"><path d="M.3 .5 L5.7 4 L.3 7.5Z" fill="#b4b4b4"/></svg>
<span class="t" style="left:1180.7px;top:396px;color:#dedede;font-size:12px;letter-spacing:0.378px;"><span class="sh">Volume</span></span>
<svg style="left:1167.5px;top:426px" width="6" height="8" viewBox="0 0 6 8"><path d="M.3 .5 L5.7 4 L.3 7.5Z" fill="#b4b4b4"/></svg>
<span class="t" style="left:1180.7px;top:420px;color:#dedede;font-size:12px;letter-spacing:0.240px;"><span class="sh">Viewport Display</span></span>
<svg style="left:1167.5px;top:450px" width="6" height="8" viewBox="0 0 6 8"><path d="M.3 .5 L5.7 4 L.3 7.5Z" fill="#b4b4b4"/></svg>
<span class="t" style="left:1180.7px;top:444px;color:#dedede;font-size:12px;letter-spacing:0.119px;"><span class="sh">Custom Properties</span></span>
<svg style="left:1346.5px;top:403px" width="11" height="5" viewBox="0 0 11 5" fill="#1e1e1e"><rect x="0" y="0" width="1.8" height="1.8"/><rect x="3" y="0" width="1.8" height="1.8"/><rect x="6" y="0" width="1.8" height="1.8"/><rect x="9" y="0" width="1.8" height="1.8"/><rect x="0" y="3.1" width="1.8" height="1.8"/><rect x="3" y="3.1" width="1.8" height="1.8"/><rect x="6" y="3.1" width="1.8" height="1.8"/><rect x="9" y="3.1" width="1.8" height="1.8"/></svg>
<svg style="left:1346.5px;top:427px" width="11" height="5" viewBox="0 0 11 5" fill="#1e1e1e"><rect x="0" y="0" width="1.8" height="1.8"/><rect x="3" y="0" width="1.8" height="1.8"/><rect x="6" y="0" width="1.8" height="1.8"/><rect x="9" y="0" width="1.8" height="1.8"/><rect x="0" y="3.1" width="1.8" height="1.8"/><rect x="3" y="3.1" width="1.8" height="1.8"/><rect x="6" y="3.1" width="1.8" height="1.8"/><rect x="9" y="3.1" width="1.8" height="1.8"/></svg>
<svg style="left:1346.5px;top:451px" width="11" height="5" viewBox="0 0 11 5" fill="#1e1e1e"><rect x="0" y="0" width="1.8" height="1.8"/><rect x="3" y="0" width="1.8" height="1.8"/><rect x="6" y="0" width="1.8" height="1.8"/><rect x="9" y="0" width="1.8" height="1.8"/><rect x="0" y="3.1" width="1.8" height="1.8"/><rect x="3" y="3.1" width="1.8" height="1.8"/><rect x="6" y="3.1" width="1.8" height="1.8"/><rect x="9" y="3.1" width="1.8" height="1.8"/></svg>
<!-- PROPERTIES tabs -->
<div class="a" style="left:1132px;top:209px;width:26px;height:26.4px;background:#2d2d2d;border-radius:4px 0 0 4px"></div>
<svg style="left:1137.6px;top:214.7px" width="15" height="15" viewBox="0 0 15 15"><path d="M2.6 .2 V6.8" stroke="#dadada" stroke-width="1.3"/><path d="M.9 6.800 H4.3 Q5.2 6.800 5.2 8 V11.800 C5.200 15 0 15 0 11.800 V8 Q0 6.800 .9 6.800Z" fill="#dadada"/><path d="M8.8 .3 C6.600 1.400 6.800 4.600 9.500 5.600 V13.200 C9.500 14.800 12.500 14.800 12.500 13.200 V5.600 C15.200 4.600 15.400 1.400 13.200 .3 V3.400 H8.800Z" fill="#dadada"/><circle cx="11" cy="12.600" r=".8" fill="#2d2d2d"/></svg>
<div class="a" style="left:1132px;top:245.3px;width:26px;height:26.4px;background:#2d2d2d;border-radius:4px 0 0 4px"></div>
<svg style="left:1137.6px;top:251.0px" width="15" height="15" viewBox="0 0 15 15"><path d="M3.800 2.400 V.8 H9.200 V2.400 M11.200 1 H13.600" stroke="#dadada" stroke-width="1.2" fill="none"/><rect x=".3" y="2.200" width="14.200" height="11.400" rx="1.200" fill="#dadada"/><rect x="1.800" y="4.200" width="8.200" height="7.800" fill="#2d2d2d"/><path d="M2.600 6 H9.200 M2.600 8.100 H9.200 M2.600 10.200 H9.200" stroke="#dadada" stroke-width="1"/><rect x="11.400" y="5" width="1.900" height="1.900" fill="#2d2d2d"/><rect x="11.400" y="8.800" width="1.900" height="1.900" fill="#2d2d2d"/></svg>
<div class="a" style="left:1132px;top:273.4px;width:26px;height:26.4px;background:#2d2d2d;border-radius:4px 0 0 4px"></div>
<svg style="left:1137.6px;top:279.09999999999997px" width="15" height="15" viewBox="0 0 15 15"><path d="M.4 5.6 V2 Q.4 .6 1.8 .6 H12.6 Q14 .6 14 2 V5.6 H12 V3.4 H2.4 V5.6Z" fill="#dadada"/><rect x="3.4" y="4.6" width="7.6" height="9" fill="#9a9a9a"/><path d="M4 12.6 L6.4 8.6 L8.8 12.6Z" fill="#2d2d2d"/><rect x="8.2" y="6" width="1.6" height="1.6" fill="#2d2d2d"/></svg>
<div class="a" style="left:1132px;top:301.4px;width:26px;height:26.4px;background:#2d2d2d;border-radius:4px 0 0 4px"></div>
<svg style="left:1137.6px;top:307.09999999999997px" width="15" height="15" viewBox="0 0 15 15"><path d="M.8 4.6 V14 H10.4 M2.8 2.8 V12 H12.4" stroke="#b0b0b0" stroke-width="1" fill="none"/><rect x="4.8" y=".6" width="9.6" height="9.6" fill="none" stroke="#dadada" stroke-width="1.2"/><path d="M5.4 9.6 L8.6 4.6 L11 8 L12 7 L13.8 9.6Z" fill="#dadada"/><rect x="11.4" y="2.2" width="1.6" height="1.6" fill="#dadada"/></svg>
<div class="a" style="left:1132px;top:329.4px;width:26px;height:26.4px;background:#2d2d2d;border-radius:4px 0 0 4px"></div>
<svg style="left:1137.6px;top:335.09999999999997px" width="15" height="15" viewBox="0 0 15 15"><path d="M4.4 1 L7.8 9 C7.8 11 6.2 12 4.4 12 C2.6 12 1 11 1 9Z" fill="#c4c4c4"/><circle cx="12" cy="2.8" r="2" fill="#dadada"/><circle cx="10.4" cy="10.8" r="3.4" fill="#2d2d2d" stroke="#dadada" stroke-width="1.2"/><path d="M8.8 10 A1.8 1.8 0 0 1 10.4 8.8" stroke="#dadada" stroke-width=".9" fill="none"/></svg>
<div class="a" style="left:1132px;top:357.4px;width:26px;height:26.4px;background:#424242;border-radius:4px 0 0 4px"></div>
<svg style="left:1137.6px;top:363.09999999999997px" width="15" height="15" viewBox="0 0 15 15"><circle cx="7.4" cy="7.6" r="6" fill="none" stroke="#e5677a" stroke-width="1.3"/><path d="M3 3.8 C4.4 2.4 6.6 2.2 8 3 C8.4 4.2 7.2 4.6 6.6 5.4 C7.6 6.2 7.4 7.4 6.2 7.6 C5.2 7.8 5.6 9.4 4.4 9.8 C3 9.6 1.8 8 2 6.2 Z M9 8 C10.2 7.2 12.4 7.8 12.6 9.2 C12.2 11 10.8 12.4 9 12.6 C8.2 11.4 8.2 9.2 9 8Z" fill="#e5677a"/><path d="M.6 14.6 L3.2 12 M11.6 3.6 L14.4 .8" stroke="#e5677a" stroke-width="1.1"/></svg>
<div class="a" style="left:1132px;top:393.4px;width:26px;height:26.4px;background:#2d2d2d;border-radius:4px 0 0 4px"></div>
<svg style="left:1137.6px;top:399.09999999999997px" width="15" height="15" viewBox="0 0 15 15"><path d="M.8 4 V.8 H4 M11 .8 H14.2 V4 M14.2 11 V14.2 H11 M4 14.2 H.8 V11" stroke="#e0904c" stroke-width="1.2" fill="none"/><rect x="3.4" y="3.4" width="8.2" height="8.2" fill="#e0904c"/></svg>
<div class="a" style="left:1132px;top:421.4px;width:26px;height:26.4px;background:#2d2d2d;border-radius:4px 0 0 4px"></div>
<svg style="left:1137.6px;top:427.09999999999997px" width="15" height="15" viewBox="0 0 15 15"><path d="M12.8 1.2 A4.2 4.2 0 0 0 7 6 L1 12 A1.6 1.6 0 0 0 3.4 14.2 L9.4 8.2 A4.2 4.2 0 0 0 14 3 L11.6 5.2 L9.8 3.6 Z" fill="#6d9fe6" transform="rotate(8 7.5 7.5)"/></svg>
<div class="a" style="left:1132px;top:449.4px;width:26px;height:26.4px;background:#2d2d2d;border-radius:4px 0 0 4px"></div>
<svg style="left:1137.6px;top:455.09999999999997px" width="15" height="15" viewBox="0 0 15 15"><path d="M3 3 H13 M3 3 V13 M3 3 L12.4 12.6" stroke="#6d9fe6" stroke-width="1.1"/><circle cx="3" cy="3" r="2.6" fill="#6d9fe6"/><circle cx="13" cy="3" r="1.5" fill="#6d9fe6"/><circle cx="3" cy="13" r="1.5" fill="#6d9fe6"/><circle cx="12.6" cy="12.6" r="2" fill="#6d9fe6"/></svg>
<div class="a" style="left:1132px;top:477.4px;width:26px;height:26.4px;background:#2d2d2d;border-radius:4px 0 0 4px"></div>
<svg style="left:1137.6px;top:483.09999999999997px" width="15" height="15" viewBox="0 0 15 15"><path d="M11.6 3.6 A6.2 6.2 0 1 0 13.4 10.6" stroke="#6d9fe6" stroke-width="1.1" fill="none"/><circle cx="7.4" cy="8.2" r="3.2" fill="#6d9fe6"/><circle cx="12.6" cy="2.8" r="2" fill="#6d9fe6"/></svg>
<div class="a" style="left:1132px;top:505.4px;width:26px;height:26.4px;background:#2d2d2d;border-radius:4px 0 0 4px"></div>
<svg style="left:1137.6px;top:511.09999999999997px" width="15" height="15" viewBox="0 0 15 15"><path d="M1 9.4 C1 5.4 6.4 4.8 9.6 1.4 C11.4 -.4 14.6 1 13.8 4 C12.6 8.4 10.4 14 5.6 14 C3 14 1 12 1 9.4Z" fill="none" stroke="#6d9fe6" stroke-width="1.1"/><circle cx="5.8" cy="9.4" r="3" fill="none" stroke="#6d9fe6" stroke-width="1.1"/><circle cx="5.8" cy="9.4" r="1.5" fill="#6d9fe6"/><circle cx="11.6" cy="3.6" r=".9" fill="#6d9fe6"/></svg>
<div class="a" style="left:1132px;top:533.4px;width:26px;height:26.4px;background:#2d2d2d;border-radius:4px 0 0 4px"></div>
<svg style="left:1137.6px;top:539.1px" width="15" height="15" viewBox="0 0 15 15"><path d="M2.4 2.6 H12.6 M2.2 3.4 L6.8 12 M12.8 3.4 L8.2 12" stroke="#1fc7a0" stroke-width="1.3" fill="none"/><rect x=".7" y=".9" width="3.2" height="3.2" fill="#2d2d2d" stroke="#1fc7a0" stroke-width="1.2"/><rect x="11.1" y=".9" width="3.2" height="3.2" fill="#2d2d2d" stroke="#1fc7a0" stroke-width="1.2"/><rect x="5.9" y="10.9" width="3.2" height="3.2" fill="#2d2d2d" stroke="#1fc7a0" stroke-width="1.2"/></svg>
<div class="a" style="left:1132px;top:561.4px;width:26px;height:26.4px;background:#2d2d2d;border-radius:4px 0 0 4px"></div>
<svg style="left:1137.6px;top:567.1px" width="15" height="15" viewBox="0 0 15 15"><circle cx="7.4" cy="7.4" r="6.6" fill="#e5677a"/><path d="M7.4 7.4 V1.4 A6 6 0 0 1 13.4 7.4Z" fill="#2d2d2d"/><path d="M7.4 7.4 V13.4 A6 6 0 0 1 2.2 10.4Z" fill="#2d2d2d"/></svg>
<div class="a" style="left:1132px;top:597.4px;width:26px;height:26.4px;background:#2d2d2d;border-radius:4px 0 0 4px"></div>
<svg style="left:1137.6px;top:603.1px" width="15" height="15" viewBox="0 0 15 15"><rect x=".4" y=".4" width="14" height="14" fill="#e5677a"/><g fill="#2d2d2d"><rect x="4.2" y="1.6" width="2.8" height="2.8"/><rect x="10" y="1.6" width="2.8" height="2.8"/><rect x="1.4" y="4.6" width="2.8" height="2.8"/><rect x="7" y="4.6" width="2.8" height="2.8"/><rect x="4.2" y="7.6" width="2.8" height="2.8"/><rect x="10" y="7.6" width="2.8" height="2.8"/><rect x="1.4" y="10.6" width="2.8" height="2.8"/><rect x="7" y="10.6" width="2.8" height="2.8"/></g></svg>
<!-- STATUS BAR -->
<svg style="left:11px;top:750px" width="12" height="16" viewBox="0 0 12 16"><rect x="1" y="1" width="10" height="14" rx="3.6" fill="none" stroke="#d0d0d0" stroke-width="1.1"/><path d="M1 7 V4.6 Q1 1 4.6 1 H5.6 V7Z" fill="#d0d0d0"/></svg>
<svg style="left:247.5px;top:750px" width="12" height="16" viewBox="0 0 12 16"><rect x="1" y="1" width="10" height="14" rx="3.6" fill="none" stroke="#d0d0d0" stroke-width="1.1"/><rect x="4.8" y="2.4" width="2.4" height="5" rx="1" fill="#d0d0d0"/></svg>
<svg style="left:484px;top:750px" width="12" height="16" viewBox="0 0 12 16"><rect x="1" y="1" width="10" height="14" rx="3.6" fill="none" stroke="#d0d0d0" stroke-width="1.1"/><path d="M11 7 V4.6 Q11 1 7.4 1 H6.4 V7Z" fill="#d0d0d0"/></svg>
<span class="t" style="left:828.6px;top:748px;color:#d4d4d4;font-size:11.5px;letter-spacing:-0.070px;">Collection</span>
<span class="t" style="left:887.2px;top:748px;color:#d4d4d4;font-size:11.5px;letter-spacing:-0.725px;">Cube</span>
<span class="t" style="left:921.5px;top:748px;color:#d4d4d4;font-size:11.5px;letter-spacing:0.056px;">Verts:7,042</span>
<span class="t" style="left:990.5px;top:748px;color:#d4d4d4;font-size:11.5px;letter-spacing:-0.145px;">Faces:7,040</span>
<span class="t" style="left:1062.3px;top:748px;color:#d4d4d4;font-size:11.5px;letter-spacing:0.008px;">Tris:14,080</span>
<span class="t" style="left:1129.6px;top:748px;color:#d4d4d4;font-size:11.5px;letter-spacing:-0.134px;">Objects:1/3</span>
<span class="t" style="left:1196.8px;top:748px;color:#d4d4d4;font-size:11.5px;letter-spacing:-0.067px;">Mem: 101.5 MiB</span>
<span class="t" style="left:1289.5px;top:748px;color:#d4d4d4;font-size:11.5px;letter-spacing:0.197px;">v2.81.16</span>
<div class="a" style="left:882.0px;top:752.5px;width:1px;height:11px;background:#a4a4a4"></div>
<div class="a" style="left:915.8px;top:752.5px;width:1px;height:11px;background:#a4a4a4"></div>
<div class="a" style="left:985.1px;top:752.5px;width:1px;height:11px;background:#a4a4a4"></div>
<div class="a" style="left:1056.8px;top:752.5px;width:1px;height:11px;background:#a4a4a4"></div>
<div class="a" style="left:1124.2px;top:752.5px;width:1px;height:11px;background:#a4a4a4"></div>
<div class="a" style="left:1191.0px;top:752.5px;width:1px;height:11px;background:#a4a4a4"></div>
<div class="a" style="left:1284.1px;top:752.5px;width:1px;height:11px;background:#a4a4a4"></div>
<div class="a" style="left:0;top:765.3px;width:1366px;height:3px;background:#e8e8e8"></div>

</div>
</body></html>
